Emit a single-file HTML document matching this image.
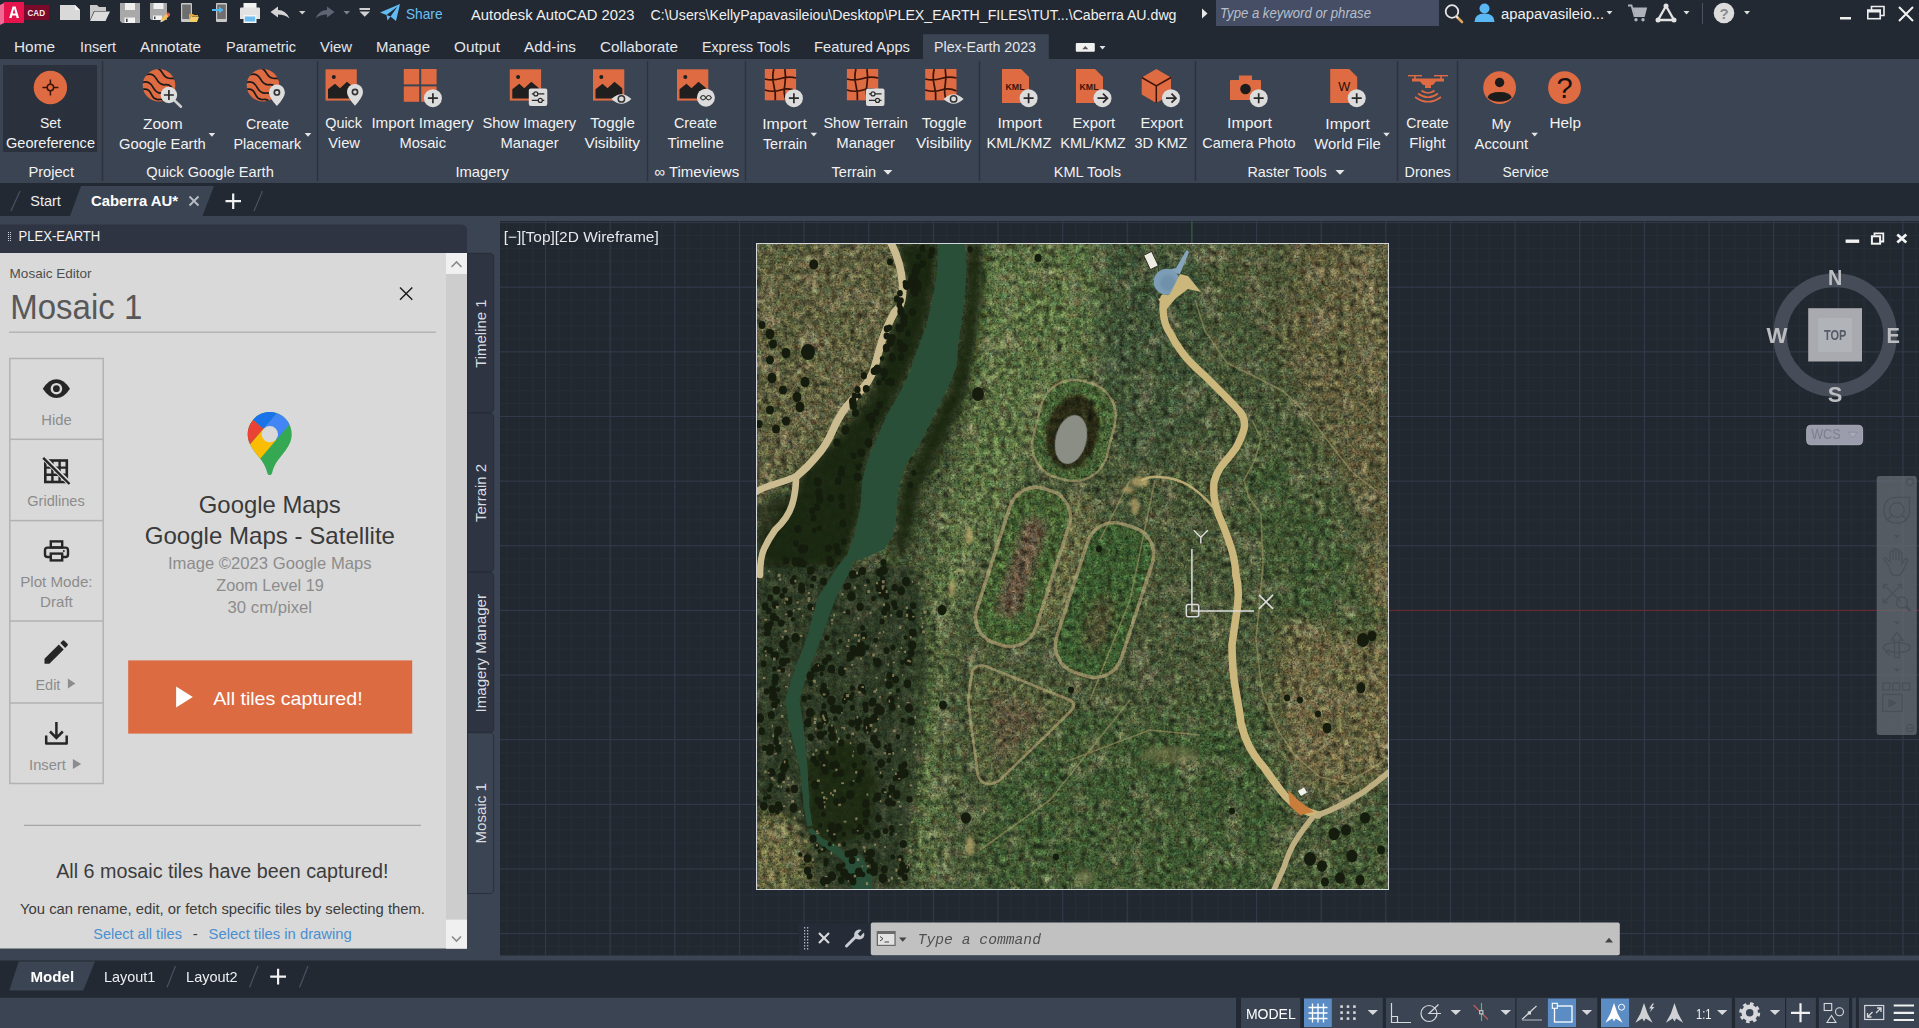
<!DOCTYPE html>
<html><head><meta charset="utf-8"><title>Autodesk AutoCAD 2023 - Caberra AU.dwg</title>
<style>
html,body{margin:0;padding:0;background:#222933;overflow:hidden;}
svg{display:block;font-family:"Liberation Sans",sans-serif;}
text{white-space:pre;}
</style></head><body>
<svg width="1919" height="1028" viewBox="0 0 1919 1028">
<defs>
<pattern id="gmin" x="1191.400" y="609.900" width="12.928" height="12.928" patternUnits="userSpaceOnUse"><path d="M0.5 0V12.928M0 0.5H12.928" stroke="#262d37" stroke-width="1" fill="none"/></pattern>
<pattern id="gmaj" x="1191.400" y="609.900" width="64.640" height="64.640" patternUnits="userSpaceOnUse"><path d="M0.5 0V64.640M0 0.5H64.640" stroke="#323949" stroke-width="1" fill="none"/></pattern>
</defs>
<rect x="0" y="0" width="1919" height="1028" fill="#222933"/>
<rect x="0" y="59" width="1919" height="124" fill="#3b4453"/>
<rect x="923" y="34.2" width="125.8" height="26" fill="#3b4453"/>
<rect x="0" y="216" width="1919" height="6" fill="#3b4453"/>
<rect x="0" y="216" width="500" height="742" fill="#3b4453"/>
<rect x="500" y="221" width="1419" height="734.5" fill="#212830"/>
<rect x="500" y="221" width="1419" height="734" fill="url(#gmin)"/>
<rect x="500" y="221" width="1419" height="734" fill="url(#gmaj)"/>
<rect x="0" y="955.5" width="1919" height="5.5" fill="#3b4453"/>
<rect x="0" y="960.5" width="1919" height="37.2" fill="#222933"/>
<rect x="0" y="997.7" width="1919" height="30.3" fill="#3b4453"/>
<path d="M1389 610.400H1919" stroke="#6b2a30" stroke-width="1"/>
<path d="M1191.900 221V243" stroke="#2c6a32" stroke-width="1"/>
<g id="titlebar">
<path d="M0 5L4 3V23L0 25Z" fill="#f06a96"/>
<rect x="4" y="2" width="20" height="21" fill="#e5144d"/>
<rect x="24" y="5" width="25" height="15" fill="#7a0a2a"/>
<path d="M9.2 18L12.6 6.5H15.6L19 18H16.6L16 15.6H12.2L11.6 18ZM12.7 13.6H15.5L14.1 8.4Z" fill="#fff"/>
<text x="27.5" y="16.3" font-size="9.5" fill="#f6e9ee" textLength="17.5" lengthAdjust="spacingAndGlyphs" font-weight="bold">CAD</text>

<path d="M60 5H75L80 10V20H60Z" fill="#d9d9d9"/><path d="M75 5V10H80Z" fill="#f4f4f4"/>
<path d="M90 5H97L99 7H106V11H94L90 20Z" fill="#c9c9c9"/><path d="M94.5 11.5H110L105.5 21H90Z" fill="#dcdcdc"/>
<path d="M120 3H140V23H122L120 21Z" fill="#a9a9a9"/><rect x="125" y="3" width="10" height="7" fill="#efefef"/><rect x="124.5" y="17.5" width="10.5" height="5.5" fill="#f2f2f2"/><rect x="126" y="18.7" width="1.6" height="3.3" fill="#444"/>
<path d="M150 3H167V20H151.5L150 18.5Z" fill="#a9a9a9"/><rect x="153.5" y="3" width="10" height="6" fill="#efefef"/><rect x="153" y="15.5" width="9" height="4.5" fill="#f2f2f2"/><rect x="154" y="16.5" width="1.5" height="2.6" fill="#444"/>
<path d="M160.5 21.5L161.5 18.5L167 13L169.5 15.5L164 21Z" fill="#f1c15a"/><path d="M166.2 13.8L167.5 12.6Q168.6 12.4 169.6 13.6Q170.4 14.8 169.8 15.6L168.7 16.7Z" fill="#e65a5a"/><path d="M160.3 22.3L161.3 19.3L163.3 21.3Z" fill="#ddd"/>
<rect x="181" y="3" width="11" height="19" rx="1" fill="#c8c8c8"/><rect x="182.2" y="4.5" width="8.6" height="14.5" fill="#6e6e6e"/>
<path d="M189 14H193L194 15H198V16.5H190.5L189 21.5Z" fill="#e3a93c"/><path d="M190.7 16.8H199L197 22H189Z" fill="#f6cf6b"/>
<rect x="216" y="3" width="11" height="19" rx="1" fill="#c8c8c8"/><rect x="217.2" y="4.5" width="8.6" height="14.5" fill="#6e6e6e"/>
<path d="M212 9H219V6.6L223.5 10L219 13.4V11H212Z" fill="#4fb6f2"/>
<rect x="243.5" y="3" width="13" height="5" fill="#f2f2f2"/><path d="M240 8.5Q240 7.5 241 7.5H259Q260 7.500 260 8.5V19H240Z" fill="#e2e2e2"/><rect x="243.500" y="15" width="13" height="8" fill="#f4f4f4"/><rect x="244.8" y="16.5" width="10.4" height="5" fill="#6fbdf0"/>
<path d="M270.5 12L278 6.5V10Q286 10 289.500 18.500Q285 14.5 278 14.500V17.500Z" fill="#d4d4d4"/>
<path d="M299 11H305.500L302.250 14.5Z" fill="#d0d0d0"/>
<path d="M334.500 12L327 6.5V10Q319 10 315.500 18.500Q320 14.5 327 14.500V17.500Z" fill="#5d6573"/>
<path d="M343.500 11H350L346.750 14.5Z" fill="#7c8491"/>
<rect x="359.500" y="8" width="10.500" height="2" fill="#d0d0d0"/><path d="M359.500 11.500H370L364.750 16.800Z" fill="#d0d0d0"/>
<path d="M380 12.500L400 4L396 21L390.500 16.500L387.500 20.500L386.500 15Z" fill="#62bbf3"/><path d="M386.500 15L397.500 6.500L390.500 16.500Z" fill="#222933"/>
<text x="406" y="19" font-size="15" fill="#6cc0f5" textLength="36.5" lengthAdjust="spacingAndGlyphs">Share</text>

<text x="471" y="19.5" font-size="15.5" fill="#f0f0f0" textLength="163.5" lengthAdjust="spacingAndGlyphs">Autodesk AutoCAD 2023</text>

<text x="650.5" y="19.5" font-size="15.5" fill="#f0f0f0" textLength="526" lengthAdjust="spacingAndGlyphs">C:\Users\KellyPapavasileiou\Desktop\PLEX_EARTH_FILES\TUT...\Caberra AU.dwg</text>

<path d="M1202 8.500L1207.500 13.500L1202 18.500Z" fill="#e8e8e8"/>
<rect x="1216" y="0" width="223" height="26" fill="#454e64"/>
<text x="1220" y="18" font-size="14.5" fill="#b9bfca" textLength="151" lengthAdjust="spacingAndGlyphs" font-style="italic">Type a keyword or phrase</text>

<circle cx="1452" cy="11.500" r="6.300" fill="none" stroke="#e6e6e6" stroke-width="1.800"/><path d="M1456.500 16.500L1462 22" stroke="#d9a45c" stroke-width="2.600" stroke-linecap="round"/><path d="M1456 16L1458 18" stroke="#e6e6e6" stroke-width="1.800"/>
<circle cx="1484.500" cy="8.500" r="5" fill="#5ab8f5"/><path d="M1474.500 22Q1474.500 13.500 1484.500 13.500Q1494.500 13.500 1494.500 22Z" fill="#5ab8f5"/>
<text x="1501" y="19" font-size="15.5" fill="#f0f0f0" textLength="103" lengthAdjust="spacingAndGlyphs">apapavasileio...</text>

<path d="M1606.500 11H1612.500L1609.500 14.500Z" fill="#e0e0e0"/>
<path d="M1628 5.500H1631.500L1634.500 16H1644L1646 8.500H1633" fill="none" stroke="#aeb3bb" stroke-width="1.800"/><path d="M1633 8.500H1646L1644 15.500H1635Z" fill="#aeb3bb"/><circle cx="1636" cy="19.700" r="1.700" fill="#aeb3bb"/><circle cx="1643" cy="19.700" r="1.700" fill="#aeb3bb"/>
<path d="M1666 6L1658 20H1674Z" fill="none" stroke="#e2e2e2" stroke-width="2.400" stroke-linejoin="round"/><circle cx="1666" cy="6" r="2.500" fill="#e2e2e2"/><circle cx="1658" cy="20" r="2.500" fill="#e2e2e2"/><circle cx="1674" cy="20" r="2.500" fill="#e2e2e2"/>
<path d="M1683.500 11H1689.500L1686.500 14.500Z" fill="#e0e0e0"/>
<rect x="1702" y="3" width="1" height="21" fill="#4a5262"/>
<circle cx="1724" cy="13" r="10.300" fill="#dcdcdc"/>
<text x="1724" y="18.5" font-size="15" fill="#8a8a8a" text-anchor="middle" font-weight="bold">?</text>

<path d="M1744 11H1750L1747 14.500Z" fill="#e0e0e0"/>
<rect x="1840" y="17" width="11" height="2.500" fill="#eee"/>
<path d="M1871.500 10V6.500H1884V15.500H1880.500" fill="none" stroke="#eee" stroke-width="1.600"/><rect x="1867.800" y="10.300" width="12.400" height="8.400" fill="none" stroke="#eee" stroke-width="1.600"/><rect x="1867" y="9.500" width="14" height="3" fill="#eee"/>
<path d="M1899 7L1913 21M1913 7L1899 21" stroke="#f2f2f2" stroke-width="2"/>
</g>
<g id="ribbon">
<text x="14" y="52" font-size="15" fill="#e4e6ea" textLength="41" lengthAdjust="spacingAndGlyphs">Home</text>

<text x="80" y="52" font-size="15" fill="#e4e6ea" textLength="36" lengthAdjust="spacingAndGlyphs">Insert</text>

<text x="140" y="52" font-size="15" fill="#e4e6ea" textLength="61" lengthAdjust="spacingAndGlyphs">Annotate</text>

<text x="226" y="52" font-size="15" fill="#e4e6ea" textLength="70" lengthAdjust="spacingAndGlyphs">Parametric</text>

<text x="320" y="52" font-size="15" fill="#e4e6ea" textLength="32" lengthAdjust="spacingAndGlyphs">View</text>

<text x="376" y="52" font-size="15" fill="#e4e6ea" textLength="54" lengthAdjust="spacingAndGlyphs">Manage</text>

<text x="454" y="52" font-size="15" fill="#e4e6ea" textLength="46" lengthAdjust="spacingAndGlyphs">Output</text>

<text x="524" y="52" font-size="15" fill="#e4e6ea" textLength="52" lengthAdjust="spacingAndGlyphs">Add-ins</text>

<text x="600" y="52" font-size="15" fill="#e4e6ea" textLength="78" lengthAdjust="spacingAndGlyphs">Collaborate</text>

<text x="702" y="52" font-size="15" fill="#e4e6ea" textLength="88" lengthAdjust="spacingAndGlyphs">Express Tools</text>

<text x="814" y="52" font-size="15" fill="#e4e6ea" textLength="96" lengthAdjust="spacingAndGlyphs">Featured Apps</text>

<text x="934" y="52" font-size="15" fill="#e4e6ea" textLength="102" lengthAdjust="spacingAndGlyphs">Plex-Earth 2023</text>

<rect x="1075.800" y="43" width="19" height="8.800" rx="1" fill="#f0f0f0"/><path d="M1082.300 49.300H1088.300L1085.300 46Z" fill="#555"/><path d="M1099.500 46H1105.500L1102.500 49.500Z" fill="#e0e0e0"/>
<path d="M102.5 61V181" stroke="#2b323e" stroke-width="1.400"/>
<path d="M317.5 61V181" stroke="#2b323e" stroke-width="1.400"/>
<path d="M647.5 61V181" stroke="#2b323e" stroke-width="1.400"/>
<path d="M745.5 61V181" stroke="#2b323e" stroke-width="1.400"/>
<path d="M979.5 61V181" stroke="#2b323e" stroke-width="1.400"/>
<path d="M1195.5 61V181" stroke="#2b323e" stroke-width="1.400"/>
<path d="M1397.5 61V181" stroke="#2b323e" stroke-width="1.400"/>
<path d="M1457.5 61V181" stroke="#2b323e" stroke-width="1.400"/>
<rect x="3" y="65" width="94" height="87" fill="#2a313d"/>
<circle cx="50.400" cy="87.500" r="16.700" fill="#de6b42"/><circle cx="50.400" cy="87.500" r="3.200" fill="none" stroke="#3a1408" stroke-width="1.500"/><path d="M50.400 79.500V84.300M50.400 90.700V95.500M42.400 87.500H47.200M53.600 87.500H58.400" stroke="#3a1408" stroke-width="1.500"/>
<text x="40" y="128" font-size="15" fill="#f2f2f2" textLength="21" lengthAdjust="spacingAndGlyphs">Set</text>

<text x="6" y="148" font-size="15" fill="#f2f2f2" textLength="89" lengthAdjust="spacingAndGlyphs">Georeference</text>

<clipPath id="gc159"><circle cx="159" cy="85.2" r="16.3"/></clipPath>
<circle cx="159" cy="85.2" r="16.3" fill="#de6b42"/>
<g clip-path="url(#gc159)"><path transform="rotate(22 159 85.2)" d="M145 73.2q6 -6 12 -1t11 2t9 4 M142 81.2q6 -6 12 -1t11 2t12 5 M142 89.2q6 -5 12 0t11 2t12 5 M144 96.2q6 -5 11 0t10 2t10 4" stroke="#1c1c1c" stroke-width="1.700" fill="none"/></g>
<path d="M174 100L181 106.700" stroke="#cfcfcf" stroke-width="2.600" stroke-linecap="round"/>
<circle cx="168.9" cy="95" r="8.3" fill="#dcdcdc"/><path d="M163.9 95H173.9M168.9 90V100" stroke="#2a2a2a" stroke-width="1.700"/>
<text x="143" y="129" font-size="15" fill="#f2f2f2" textLength="39.6" lengthAdjust="spacingAndGlyphs">Zoom</text>

<text x="119" y="149" font-size="15" fill="#f2f2f2" textLength="86.8" lengthAdjust="spacingAndGlyphs">Google Earth</text>

<path d="M208.6 133.0H215.20000000000002L211.9 136.8Z" fill="#e6e6e6"/>
<clipPath id="gc263"><circle cx="263" cy="85.2" r="16.3"/></clipPath>
<circle cx="263" cy="85.2" r="16.3" fill="#de6b42"/>
<g clip-path="url(#gc263)"><path transform="rotate(22 263 85.2)" d="M249 73.2q6 -6 12 -1t11 2t9 4 M246 81.2q6 -6 12 -1t11 2t12 5 M246 89.2q6 -5 12 0t11 2t12 5 M248 96.2q6 -5 11 0t10 2t10 4" stroke="#1c1c1c" stroke-width="1.700" fill="none"/></g>
<path d="M276.9 105.9Q268.9 97.4 268.9 92.4A8 8 0 1 1 284.9 92.4Q284.9 97.4 276.9 105.9Z" fill="#dcdcdc"/><circle cx="276.9" cy="92.4" r="2.600" fill="none" stroke="#333" stroke-width="1.700"/>
<text x="246" y="129" font-size="15" fill="#f2f2f2" textLength="43" lengthAdjust="spacingAndGlyphs">Create</text>

<text x="233.4" y="149" font-size="15" fill="#f2f2f2" textLength="67.9" lengthAdjust="spacingAndGlyphs">Placemark</text>

<path d="M304.7 133.0H311.3L308 136.8Z" fill="#e6e6e6"/>
<rect x="325.5" y="69.3" width="31.3" height="31.3" fill="#de6b42"/>
<path d="M328.0 98.6V89.3L335.0 83.8L340.0 88.3L347.0 81.8L354.8 88.3V98.6Z" fill="#1f1f1f"/><circle cx="333.8" cy="77.0" r="2" fill="#1f1f1f"/>
<path d="M355 105.7Q347 97 347 92A8 8 0 1 1 363 92Q363 97 355 105.7Z" fill="#dcdcdc"/><circle cx="355" cy="92" r="2.600" fill="none" stroke="#333" stroke-width="1.700"/>
<text x="325.2" y="127.7" font-size="15" fill="#f2f2f2" textLength="36.8" lengthAdjust="spacingAndGlyphs">Quick</text>

<text x="328.3" y="148" font-size="15" fill="#f2f2f2" textLength="31.7" lengthAdjust="spacingAndGlyphs">View</text>

<rect x="403.8" y="69" width="15.400" height="15.400" fill="#de6b42"/>
<rect x="421.2" y="69" width="15.400" height="15.400" fill="#de6b42"/>
<rect x="403.8" y="86.4" width="15.400" height="15.400" fill="#de6b42"/>
<rect x="421.2" y="86.4" width="15.400" height="15.400" fill="#de6b42"/>
<circle cx="432.9" cy="98.2" r="9" fill="#dcdcdc"/><path d="M427.9 98.2H437.9M432.9 93.2V103.2" stroke="#2a2a2a" stroke-width="1.700"/>
<text x="371.4" y="127.7" font-size="15" fill="#f2f2f2" textLength="102.3" lengthAdjust="spacingAndGlyphs">Import Imagery</text>

<text x="399.4" y="148" font-size="15" fill="#f2f2f2" textLength="46.6" lengthAdjust="spacingAndGlyphs">Mosaic</text>

<rect x="509.8" y="69.3" width="31.3" height="31.3" fill="#de6b42"/>
<path d="M512.3 98.6V89.3L519.3 83.8L524.3 88.3L531.3 81.8L539.1 88.3V98.6Z" fill="#1f1f1f"/><circle cx="518.1" cy="77.0" r="2" fill="#1f1f1f"/>
<rect x="528.8" y="88.4" width="18.5" height="17.5" rx="2" fill="#dcdcdc"/>
<path d="M531.8 93.9H544.3M531.8 100.4H544.3" stroke="#2a2a2a" stroke-width="1.300"/><circle cx="535.8" cy="93.9" r="2" fill="#dcdcdc" stroke="#2a2a2a" stroke-width="1.200"/><circle cx="540.3" cy="100.4" r="2" fill="#dcdcdc" stroke="#2a2a2a" stroke-width="1.200"/>
<text x="482.4" y="127.7" font-size="15" fill="#f2f2f2" textLength="93.8" lengthAdjust="spacingAndGlyphs">Show Imagery</text>

<text x="500.4" y="148" font-size="15" fill="#f2f2f2" textLength="58.2" lengthAdjust="spacingAndGlyphs">Manager</text>

<rect x="593" y="69.3" width="31.3" height="31.3" fill="#de6b42"/>
<path d="M595.5 98.6V89.3L602.5 83.8L607.5 88.3L614.5 81.8L622.3 88.3V98.6Z" fill="#1f1f1f"/><circle cx="601.3" cy="77.0" r="2" fill="#1f1f1f"/>
<path d="M611.4 98.9Q621.4 89.4 631.4 98.9Q621.4 108.4 611.4 98.9Z" fill="#dcdcdc"/><circle cx="621.4" cy="98.9" r="3.200" fill="#dcdcdc" stroke="#333" stroke-width="1.500"/>
<text x="590.3" y="127.7" font-size="15" fill="#f2f2f2" textLength="44.5" lengthAdjust="spacingAndGlyphs">Toggle</text>

<text x="584.4" y="148" font-size="15" fill="#f2f2f2" textLength="55.6" lengthAdjust="spacingAndGlyphs">Visibility</text>

<rect x="677" y="69.3" width="31.3" height="31.3" fill="#de6b42"/>
<path d="M679.5 98.6V89.3L686.5 83.8L691.5 88.3L698.5 81.8L706.3 88.3V98.6Z" fill="#1f1f1f"/><circle cx="685.3" cy="77.0" r="2" fill="#1f1f1f"/>
<circle cx="705.900" cy="97.700" r="9" fill="#dcdcdc"/><path d="M700.400 97.700q2.700 -4.400 5.500 0t5.500 0q-2.700 -4.400 -5.500 0t-5.500 0z" fill="none" stroke="#333" stroke-width="1.200"/>
<text x="674" y="127.7" font-size="15" fill="#f2f2f2" textLength="42.9" lengthAdjust="spacingAndGlyphs">Create</text>

<text x="667.6" y="148" font-size="15" fill="#f2f2f2" textLength="56.3" lengthAdjust="spacingAndGlyphs">Timeline</text>

<rect x="764.8" y="69" width="31.3" height="31.3" fill="#de6b42"/>
<path d="M764.8 79Q772.8 81 780.8 78.5T796.0999999999999 78M764.8 90Q772.8 92.5 780.8 90T796.0999999999999 91M773.8 69Q771.8 77 773.8 85T775.3 100.3M784.8 69Q786.3 77 784.8 85T785.8 100.3" stroke="#3a1408" stroke-width="1.700" fill="none"/>
<circle cx="793.9" cy="98.2" r="9" fill="#dcdcdc"/><path d="M788.9 98.2H798.9M793.9 93.2V103.2" stroke="#2a2a2a" stroke-width="1.700"/>
<text x="762.2" y="128.7" font-size="15" fill="#f2f2f2" textLength="44.8" lengthAdjust="spacingAndGlyphs">Import</text>

<text x="762.9" y="148.6" font-size="15" fill="#f2f2f2" textLength="44.1" lengthAdjust="spacingAndGlyphs">Terrain</text>

<path d="M810.5 132.79999999999998H817.0999999999999L813.8 136.6Z" fill="#e6e6e6"/>
<rect x="846.9" y="69" width="31.3" height="31.3" fill="#de6b42"/>
<path d="M846.9 79Q854.9 81 862.9 78.5T878.1999999999999 78M846.9 90Q854.9 92.5 862.9 90T878.1999999999999 91M855.9 69Q853.9 77 855.9 85T857.4 100.3M866.9 69Q868.4 77 866.9 85T867.9 100.3" stroke="#3a1408" stroke-width="1.700" fill="none"/>
<rect x="866" y="88.4" width="18.5" height="17.5" rx="2" fill="#dcdcdc"/>
<path d="M869 93.9H881.5M869 100.4H881.5" stroke="#2a2a2a" stroke-width="1.300"/><circle cx="873" cy="93.9" r="2" fill="#dcdcdc" stroke="#2a2a2a" stroke-width="1.200"/><circle cx="877.5" cy="100.4" r="2" fill="#dcdcdc" stroke="#2a2a2a" stroke-width="1.200"/>
<text x="823.4" y="127.7" font-size="15" fill="#f2f2f2" textLength="84.4" lengthAdjust="spacingAndGlyphs">Show Terrain</text>

<text x="836.3" y="148" font-size="15" fill="#f2f2f2" textLength="58.6" lengthAdjust="spacingAndGlyphs">Manager</text>

<rect x="925.2" y="69" width="31.3" height="31.3" fill="#de6b42"/>
<path d="M925.2 79Q933.2 81 941.2 78.5T956.5 78M925.2 90Q933.2 92.5 941.2 90T956.5 91M934.2 69Q932.2 77 934.2 85T935.7 100.3M945.2 69Q946.7 77 945.2 85T946.2 100.3" stroke="#3a1408" stroke-width="1.700" fill="none"/>
<path d="M943.6 98.9Q953.6 89.4 963.6 98.9Q953.6 108.4 943.6 98.9Z" fill="#dcdcdc"/><circle cx="953.6" cy="98.9" r="3.200" fill="#dcdcdc" stroke="#333" stroke-width="1.500"/>
<text x="921.7" y="127.7" font-size="15" fill="#f2f2f2" textLength="44.8" lengthAdjust="spacingAndGlyphs">Toggle</text>

<text x="916" y="148" font-size="15" fill="#f2f2f2" textLength="55.6" lengthAdjust="spacingAndGlyphs">Visibility</text>

<path d="M1002 69H1021L1029 77V103H1002Z" fill="#de6b42"/>
<text x="1005.5" y="90" font-size="9" fill="#3a1408" textLength="19" lengthAdjust="spacingAndGlyphs" font-weight="bold">KML</text>

<circle cx="1028.6" cy="98.2" r="9" fill="#dcdcdc"/><path d="M1023.5999999999999 98.2H1033.6M1028.6 93.2V103.2" stroke="#2a2a2a" stroke-width="1.700"/>
<text x="997.4" y="127.7" font-size="15" fill="#f2f2f2" textLength="44.6" lengthAdjust="spacingAndGlyphs">Import</text>

<text x="986.4" y="148" font-size="15" fill="#f2f2f2" textLength="65.0" lengthAdjust="spacingAndGlyphs">KML/KMZ</text>

<path d="M1076 69H1095L1103 77V103H1076Z" fill="#de6b42"/>
<text x="1079.5" y="90" font-size="9" fill="#3a1408" textLength="19" lengthAdjust="spacingAndGlyphs" font-weight="bold">KML</text>

<circle cx="1102.5" cy="98.2" r="9" fill="#dcdcdc"/><path d="M1097.5 98.2H1107.0M1103.0 93.7L1107.5 98.2L1103.0 102.7" stroke="#2a2a2a" stroke-width="1.700" fill="none"/>
<text x="1072.5" y="127.7" font-size="15" fill="#f2f2f2" textLength="42.7" lengthAdjust="spacingAndGlyphs">Export</text>

<text x="1060.3" y="148" font-size="15" fill="#f2f2f2" textLength="65.4" lengthAdjust="spacingAndGlyphs">KML/KMZ</text>

<path d="M1156.300 69L1171 77.500V94.500L1156.300 103L1141.700 94.500V77.500Z" fill="#de6b42"/><path d="M1141.700 77.500L1156.300 86L1171 77.500M1156.300 86V103" stroke="#3a1408" stroke-width="1.500" fill="none"/>
<circle cx="1171" cy="98.2" r="9" fill="#dcdcdc"/><path d="M1166 98.2H1175.5M1171.5 93.7L1176 98.2L1171.5 102.7" stroke="#2a2a2a" stroke-width="1.700" fill="none"/>
<text x="1140.5" y="127.7" font-size="15" fill="#f2f2f2" textLength="42.7" lengthAdjust="spacingAndGlyphs">Export</text>

<text x="1134.6" y="148" font-size="15" fill="#f2f2f2" textLength="52.8" lengthAdjust="spacingAndGlyphs">3D KMZ</text>

<path d="M1230 81Q1230 80 1231 80H1239V75.500H1252V80H1260Q1261 80 1261 81V100H1230Z" fill="#de6b42"/><circle cx="1245.500" cy="89" r="5.300" fill="#1c1c1c"/>
<circle cx="1258.7" cy="98.2" r="9" fill="#dcdcdc"/><path d="M1253.7 98.2H1263.7M1258.7 93.2V103.2" stroke="#2a2a2a" stroke-width="1.700"/>
<text x="1227" y="127.7" font-size="15" fill="#f2f2f2" textLength="45" lengthAdjust="spacingAndGlyphs">Import</text>

<text x="1202.2" y="148" font-size="15" fill="#f2f2f2" textLength="93.3" lengthAdjust="spacingAndGlyphs">Camera Photo</text>

<path d="M1330.2 69H1349.2L1357.2 77V103H1330.2Z" fill="#de6b42"/>
<text x="1338.2" y="91" font-size="12.5" fill="#2a0e04" textLength="12" lengthAdjust="spacingAndGlyphs">W</text>

<circle cx="1356.7" cy="98.2" r="9" fill="#dcdcdc"/><path d="M1351.7 98.2H1361.7M1356.7 93.2V103.2" stroke="#2a2a2a" stroke-width="1.700"/>
<text x="1325.3" y="128.7" font-size="15" fill="#f2f2f2" textLength="44.7" lengthAdjust="spacingAndGlyphs">Import</text>

<text x="1314.3" y="148.6" font-size="15" fill="#f2f2f2" textLength="66.4" lengthAdjust="spacingAndGlyphs">World File</text>

<path d="M1383.2 132.79999999999998H1389.8L1386.5 136.6Z" fill="#e6e6e6"/>
<g fill="#de6b42" stroke="none"><rect x="1408" y="75" width="14" height="1.400"/><rect x="1434" y="75" width="14" height="1.400"/><rect x="1414.200" y="75" width="1.600" height="4"/><rect x="1440.200" y="75" width="1.600" height="4"/><path d="M1412 78.500H1444V81.500H1436L1433 85H1423L1420 81.500H1412Z"/><rect x="1425" y="85" width="6" height="3" /></g>
<path d="M1421.500 90.500Q1428 95.500 1434.500 90.500M1418 93.500Q1428 101 1438 93.500M1415 97Q1428 106.500 1441 97" stroke="#de6b42" stroke-width="1.700" fill="none"/>
<text x="1406.2" y="127.7" font-size="15" fill="#f2f2f2" textLength="42.5" lengthAdjust="spacingAndGlyphs">Create</text>

<text x="1409.3" y="148" font-size="15" fill="#f2f2f2" textLength="36.3" lengthAdjust="spacingAndGlyphs">Flight</text>

<circle cx="1499.600" cy="87.700" r="16.400" fill="#de6b42"/><circle cx="1499.600" cy="82.500" r="4.700" fill="#1c1c1c"/><path d="M1487.500 97.500Q1489 92 1499.600 92Q1510 92 1511.700 97.500Q1507 101.800 1499.600 101.800Q1492 101.800 1487.500 97.500Z" fill="#1c1c1c"/>
<text x="1491.4" y="128.7" font-size="15" fill="#f2f2f2" textLength="19.4" lengthAdjust="spacingAndGlyphs">My</text>

<text x="1474.5" y="148.6" font-size="15" fill="#f2f2f2" textLength="53.7" lengthAdjust="spacingAndGlyphs">Account</text>

<path d="M1531.4 132.79999999999998H1538.0L1534.7 136.6Z" fill="#e6e6e6"/>
<circle cx="1564.500" cy="87.700" r="16.400" fill="#de6b42"/>
<text x="1564.5" y="98" font-size="29" fill="#111" text-anchor="middle">?</text>

<text x="1549.5" y="127.7" font-size="15" fill="#f2f2f2" textLength="31.5" lengthAdjust="spacingAndGlyphs">Help</text>

<text x="28.4" y="176.9" font-size="15" fill="#f2f2f2" textLength="45.6" lengthAdjust="spacingAndGlyphs">Project</text>

<text x="146.3" y="176.9" font-size="15" fill="#f2f2f2" textLength="127.5" lengthAdjust="spacingAndGlyphs">Quick Google Earth</text>

<text x="455.4" y="176.9" font-size="15" fill="#f2f2f2" textLength="53.5" lengthAdjust="spacingAndGlyphs">Imagery</text>

<text x="654.3" y="176.9" font-size="15" fill="#f2f2f2" textLength="84.9" lengthAdjust="spacingAndGlyphs">∞ Timeviews</text>

<text x="831.6" y="176.9" font-size="15" fill="#f2f2f2" textLength="44.4" lengthAdjust="spacingAndGlyphs">Terrain</text>

<path d="M883.4 170.0H892.4L887.9 174.8Z" fill="#e6e6e6"/>
<text x="1053.7" y="176.9" font-size="15" fill="#f2f2f2" textLength="67.3" lengthAdjust="spacingAndGlyphs">KML Tools</text>

<text x="1247.5" y="176.9" font-size="15" fill="#f2f2f2" textLength="79.2" lengthAdjust="spacingAndGlyphs">Raster Tools</text>

<path d="M1335.5 170.0H1344.5L1340 174.8Z" fill="#e6e6e6"/>
<text x="1404.6" y="176.9" font-size="15" fill="#f2f2f2" textLength="46.2" lengthAdjust="spacingAndGlyphs">Drones</text>

<text x="1502.6" y="176.9" font-size="15" fill="#f2f2f2" textLength="46.2" lengthAdjust="spacingAndGlyphs">Service</text>

</g>
<g id="filetabs">
<path d="M81 186H214L202.500 216H70Z" fill="#3b4453"/>
<path d="M11 211L20 191M254 211L262.500 191" stroke="#4a5262" stroke-width="1.200"/>
<text x="30.3" y="206.4" font-size="15" fill="#eceef1" textLength="30.6" lengthAdjust="spacingAndGlyphs">Start</text>

<text x="91" y="206.4" font-size="15" fill="#ffffff" textLength="87" lengthAdjust="spacingAndGlyphs" font-weight="bold">Caberra AU*</text>

<path d="M189.500 196.500L198.500 205.500M198.500 196.500L189.500 205.500" stroke="#b5bac3" stroke-width="2"/>
<path d="M225.500 201.200H241M233.200 193.500V209" stroke="#f2f2f2" stroke-width="2.200"/>
</g>
<g id="palette">
<path d="M0 224.500H461Q467 224.500 467 230.500V253H0Z" fill="#2e3441"/>
<rect x="8" y="232" width="1" height="1" fill="#cfd2d8"/><rect x="10" y="232" width="1" height="1" fill="#cfd2d8"/>
<rect x="8" y="234" width="1" height="1" fill="#cfd2d8"/><rect x="10" y="234" width="1" height="1" fill="#cfd2d8"/>
<rect x="8" y="236" width="1" height="1" fill="#cfd2d8"/><rect x="10" y="236" width="1" height="1" fill="#cfd2d8"/>
<rect x="8" y="238" width="1" height="1" fill="#cfd2d8"/><rect x="10" y="238" width="1" height="1" fill="#cfd2d8"/>
<rect x="8" y="240" width="1" height="1" fill="#cfd2d8"/><rect x="10" y="240" width="1" height="1" fill="#cfd2d8"/>
<text x="18.6" y="241.4" font-size="15" fill="#f4f4f4" textLength="81.6" lengthAdjust="spacingAndGlyphs">PLEX-EARTH</text>

<rect x="0" y="253" width="467" height="695.500" fill="#d9d9d9"/>
<rect x="446" y="253" width="21" height="695.500" fill="#cdcdcd"/>
<rect x="446" y="253" width="21" height="21" fill="#f0f0f0"/><rect x="446" y="919.700" width="21" height="28.800" fill="#f0f0f0"/>
<path d="M451.500 267L456.500 262L461.500 267" fill="none" stroke="#8a8a8a" stroke-width="1.600"/><path d="M452 936.500L456.500 941L461 936.500" fill="none" stroke="#8a8a8a" stroke-width="1.600"/>
<path d="M467.500 253.3H489.500Q493.700 253.3 493.700 257.3V408.7Q493.700 412.7 489.500 412.7H467.500Z" fill="#2e3441" stroke="#252b36" stroke-width="0.800"/>
<text transform="translate(486.300 333.65) rotate(-90)" text-anchor="middle" font-size="15" fill="#dadde2" textLength="68.30000000000001" lengthAdjust="spacingAndGlyphs">Timeline 1</text>
<path d="M467.500 413H489.500Q493.700 413 493.700 417V568Q493.700 572 489.500 572H467.500Z" fill="#2e3441" stroke="#252b36" stroke-width="0.800"/>
<text transform="translate(486.300 493.0) rotate(-90)" text-anchor="middle" font-size="15" fill="#dadde2" textLength="58" lengthAdjust="spacingAndGlyphs">Terrain 2</text>
<path d="M467.500 572.3H489.500Q493.700 572.3 493.700 576.3V728.4Q493.700 732.4 489.500 732.4H467.500Z" fill="#2e3441" stroke="#252b36" stroke-width="0.800"/>
<text transform="translate(486.300 653.25) rotate(-90)" text-anchor="middle" font-size="15" fill="#dadde2" textLength="118.5" lengthAdjust="spacingAndGlyphs">Imagery Manager</text>
<path d="M467.500 732.7H489.500Q493.700 732.7 493.700 736.7V889.5Q493.700 893.5 489.500 893.5H467.500Z" fill="#3b4453" stroke="#252b36" stroke-width="0.800"/>
<text transform="translate(486.300 813.25) rotate(-90)" text-anchor="middle" font-size="15" fill="#dadde2" textLength="60.5" lengthAdjust="spacingAndGlyphs">Mosaic 1</text>
<text x="9.6" y="278" font-size="13.5" fill="#4e4e4e" textLength="82" lengthAdjust="spacingAndGlyphs">Mosaic Editor</text>

<text x="10.3" y="318.7" font-size="35" fill="#585858" textLength="132" lengthAdjust="spacingAndGlyphs">Mosaic 1</text>

<path d="M400 287.500L412.300 299.800M412.300 287.500L400 299.800" stroke="#1a1a1a" stroke-width="1.400"/>
<rect x="9" y="331.500" width="427" height="1.500" fill="#b4b4b4"/>
<rect x="9.800" y="358.500" width="93.400" height="425" fill="none" stroke="#b2b2b2" stroke-width="1.500"/>
<rect x="9.800" y="438.55" width="93.400" height="1.500" fill="#b2b2b2"/>
<rect x="9.800" y="519.85" width="93.400" height="1.500" fill="#b2b2b2"/>
<rect x="9.800" y="620.25" width="93.400" height="1.500" fill="#b2b2b2"/>
<rect x="9.800" y="702.25" width="93.400" height="1.500" fill="#b2b2b2"/>
<path d="M42.800 388.700Q49 379.300 56.400 379.300Q63.800 379.300 70 388.700Q63.800 398.100 56.400 398.100Q49 398.100 42.800 388.700Z" fill="#262626"/><circle cx="56.400" cy="388.700" r="5.800" fill="#d9d9d9"/><circle cx="56.400" cy="388.700" r="3.400" fill="#262626"/>
<text x="41.3" y="424.9" font-size="15" fill="#8c8c8c" textLength="30.4" lengthAdjust="spacingAndGlyphs">Hide</text>

<rect x="45.300" y="460.500" width="21.500" height="21.500" fill="none" stroke="#262626" stroke-width="2.600"/><path d="M52.400 460V482M59.600 460V482M45 467.600H67M45 474.800H67" stroke="#262626" stroke-width="2.400"/><path d="M42.500 456.500L70 484" stroke="#d9d9d9" stroke-width="5"/><path d="M43.200 457.800L69.500 484" stroke="#262626" stroke-width="2.400"/>
<text x="27.2" y="506" font-size="15" fill="#8c8c8c" textLength="57.6" lengthAdjust="spacingAndGlyphs">Gridlines</text>

<rect x="50.800" y="541.400" width="11.400" height="6" fill="none" stroke="#262626" stroke-width="2.400"/><rect x="45" y="547.600" width="23" height="9.400" rx="2.600" fill="none" stroke="#262626" stroke-width="2.400"/><rect x="50.800" y="553.600" width="11.400" height="6.800" fill="#d9d9d9" stroke="#262626" stroke-width="2.400"/><circle cx="63.800" cy="551" r="1" fill="#262626"/>
<text x="20.2" y="586.9" font-size="15" fill="#8c8c8c" textLength="72.4" lengthAdjust="spacingAndGlyphs">Plot Mode:</text>

<text x="40" y="606.5" font-size="15" fill="#8c8c8c" textLength="32.8" lengthAdjust="spacingAndGlyphs">Draft</text>

<path d="M44.500 663.700V658.800L58.800 644.500L63.700 649.400L49.400 663.700Z" fill="#262626"/><path d="M60.300 643L62.600 640.700Q63.500 639.900 64.400 640.700L67.500 643.800Q68.300 644.700 67.500 645.600L65.200 647.900Z" fill="#262626"/>
<text x="35.4" y="689.5" font-size="15" fill="#8c8c8c" textLength="25" lengthAdjust="spacingAndGlyphs">Edit</text>

<path d="M67.900 678.500L75.400 683.500L67.900 688.500Z" fill="#8c8c8c"/>
<path d="M56.400 722V737M50 731.500L56.400 738L62.800 731.500" fill="none" stroke="#262626" stroke-width="2.500"/><path d="M46.200 735.500V743.600H66.700V735.500" fill="none" stroke="#262626" stroke-width="2.500" stroke-linejoin="round"/>
<text x="29.1" y="769.9" font-size="15" fill="#8c8c8c" textLength="36.7" lengthAdjust="spacingAndGlyphs">Insert</text>

<path d="M72.900 759L81.200 764L72.900 769Z" fill="#8c8c8c"/>
<clipPath id="gpin"><path d="M269.700 412.100C257.500 412.100 247.700 422 247.700 434.100C247.700 440.500 250 445 253.500 450C258.500 457 264.500 462 267.200 472.500C267.600 474.300 268.500 475.100 269.700 475.100C270.900 475.100 271.800 474.300 272.200 472.500C274.900 462 280.900 457 285.900 450C289.400 445 291.700 440.500 291.700 434.100C291.700 422 281.900 412.100 269.700 412.100Z"/></clipPath>
<g clip-path="url(#gpin)"><rect x="240" y="405" width="60" height="75" fill="#34a853"/><path d="M263.350 428.650L289.300 398.400L312.500 397.600L276.350 439.800Z" fill="#4285f4"/><path d="M263.350 428.650L276.350 439.800L234.400 488.800L224.200 474.400Z" fill="#fbbc04"/><path d="M263.350 428.650L289.300 398.400L230 390L239.400 408.200Z" fill="#1a73e8"/><path d="M263.350 428.650L239.400 408.200L220 440L224.200 474.400Z" fill="#ea4335"/></g>
<circle cx="269.800" cy="434.200" r="8.200" fill="#d9d9d9"/>
<text x="198.8" y="512.6" font-size="24" fill="#3a3a3a" textLength="142" lengthAdjust="spacingAndGlyphs">Google Maps</text>

<text x="144.7" y="544" font-size="24" fill="#3a3a3a" textLength="250.3" lengthAdjust="spacingAndGlyphs">Google Maps - Satellite</text>

<text x="168" y="569" font-size="16.5" fill="#8c8c8c" textLength="203.6" lengthAdjust="spacingAndGlyphs">Image ©2023 Google Maps</text>

<text x="216.3" y="590.8" font-size="16.5" fill="#8c8c8c" textLength="107.4" lengthAdjust="spacingAndGlyphs">Zoom Level 19</text>

<text x="227.6" y="613" font-size="16.5" fill="#8c8c8c" textLength="84.4" lengthAdjust="spacingAndGlyphs">30 cm/pixel</text>

<rect x="128.200" y="660.400" width="284" height="73.200" fill="#dd6b42"/>
<path d="M176.100 686.600L192.800 697L176.100 707.400Z" fill="#fff"/>
<text x="213.2" y="704.5" font-size="19" fill="#fff" textLength="149.4" lengthAdjust="spacingAndGlyphs">All tiles captured!</text>

<rect x="24" y="824.800" width="397" height="1" fill="#9a9a9a"/>
<text x="56.2" y="877.7" font-size="20" fill="#3c3c3c" textLength="332.2" lengthAdjust="spacingAndGlyphs">All 6 mosaic tiles have been captured!</text>

<text x="20" y="913.5" font-size="15" fill="#3c3c3c" textLength="405" lengthAdjust="spacingAndGlyphs">You can rename, edit, or fetch specific tiles by selecting them.</text>

<text x="93.3" y="938.5" font-size="15" fill="#4a8fd0" textLength="88.6" lengthAdjust="spacingAndGlyphs">Select all tiles</text>

<text x="192.8" y="938.5" font-size="15" fill="#3c3c3c">-</text>

<text x="208.6" y="938.5" font-size="15" fill="#4a8fd0" textLength="143.2" lengthAdjust="spacingAndGlyphs">Select tiles in drawing</text>

</g>
<defs>
<clipPath id="satclip"><rect x="756.500" y="243.500" width="632" height="646"/></clipPath>
<filter id="b12" x="-20%" y="-20%" width="140%" height="140%"><feGaussianBlur stdDeviation="10"/></filter>
<filter id="b5" x="-20%" y="-20%" width="140%" height="140%"><feGaussianBlur stdDeviation="4"/></filter>
<filter id="b2" x="-20%" y="-20%" width="140%" height="140%"><feGaussianBlur stdDeviation="1.800"/></filter>
<filter id="b1" x="-20%" y="-20%" width="140%" height="140%"><feGaussianBlur stdDeviation="0.700"/></filter>
<filter id="noise" x="0" y="0" width="100%" height="100%" color-interpolation-filters="sRGB">
 <feTurbulence type="fractalNoise" baseFrequency="0.55" numOctaves="2" seed="7" result="n"/>
 <feColorMatrix in="n" type="matrix" values="0.85 0.75 0.75 0 -0.675  0.75 0.85 0.75 0 -0.675  0.75 0.75 0.8 0 -0.65  0 0 0 0 1"/>
</filter>
<filter id="noise2" x="0" y="0" width="100%" height="100%" color-interpolation-filters="sRGB">
 <feTurbulence type="fractalNoise" baseFrequency="0.16" numOctaves="2" seed="23" result="n"/>
 <feColorMatrix in="n" type="matrix" values="0.9 0.65 0.55 0 -0.55  0.62 0.9 0.58 0 -0.55  0.5 0.8 0.75 0 -0.53  0 0 0 0 1"/>
</filter>
<filter id="dspeck" x="0" y="0" width="100%" height="100%" color-interpolation-filters="sRGB">
 <feTurbulence type="fractalNoise" baseFrequency="0.5" numOctaves="2" seed="41" result="n"/>
 <feColorMatrix in="n" type="matrix" values="0 0 0 0 0.06  0 0 0 0 0.08  0 0 0 0 0.04  3.5 3.5 0 0 -4.0"/>
</filter>
<filter id="blotch" x="0" y="0" width="100%" height="100%">
 <feTurbulence type="fractalNoise" baseFrequency="0.03" numOctaves="3" seed="3" result="n"/>
 <feColorMatrix in="n" type="matrix" values="0 0 0 0 0.1  0 0 0 0 0.13  0 0 0 0 0.05  2.4 0 0 0 -1.0"/>
</filter>
<filter id="blotch2" x="0" y="0" width="100%" height="100%">
 <feTurbulence type="fractalNoise" baseFrequency="0.045" numOctaves="3" seed="11" result="n"/>
 <feColorMatrix in="n" type="matrix" values="0 0 0 0 0.5  0 0 0 0 0.4  0 0 0 0 0.27  0 2.4 0 0 -1.15"/>
</filter>
</defs>
<g clip-path="url(#satclip)">
<rect x="756" y="243" width="633" height="647" fill="#4a5a3b"/>
<g filter="url(#b12)">
<path d="M740 230H900L905 290L885 345L865 395L832 440L796 478L740 500Z" fill="#6a6846"/>
<path d="M975 243H1150L1150 330L1060 400L1000 520L940 640L945 890H920L915 700L935 560L965 420Z" fill="#627a4a"/>
<path d="M1275 230H1400V590L1350 490L1300 390L1265 320Z" fill="#676242"/>
<path d="M1330 230H1400V460L1355 380Z" fill="#716b48"/>
<path d="M1200 243H1300L1290 330L1230 290Z" fill="#525c3c"/>
<path d="M1280 600L1400 540V770L1335 800L1290 770L1275 700Z" fill="#766d49"/>
<path d="M1250 420L1340 520L1389 640L1280 620L1245 520Z" fill="#3f5a34"/>
<path d="M1000 720L1260 700L1290 830L1270 900H960Z" fill="#3f5c34"/>
<path d="M1310 830L1400 780V900H1280Z" fill="#445c38"/>
<path d="M1100 243H1200L1200 420L1130 470L1090 380Z" fill="#41563a"/>
<path d="M740 805L795 812L812 850L805 900H740Z" fill="#74724a"/>
</g>
<rect x="756" y="243" width="633" height="647" filter="url(#blotch)" opacity="0.5"/>
<rect x="756" y="243" width="633" height="647" filter="url(#blotch2)" opacity="0.45"/>
<g filter="url(#b1)" fill="none">
<ellipse cx="1062" cy="560" rx="26" ry="70" transform="rotate(18 1062 560)" fill="#75774e" filter="url(#b5)" stroke="none" opacity="0.8"/>
<g transform="translate(1074 430.500) rotate(14)">
<rect x="-38" y="-50" width="76" height="100" rx="34" fill="#4d6b3b" stroke="#8a865c" stroke-width="2.500" stroke-opacity="0.7"/>
<ellipse cx="-1" cy="2" rx="26" ry="38" fill="#2a2916" filter="url(#b2)"/>
</g>
<g transform="translate(1023 567) rotate(18)">
<rect x="-31" y="-81" width="62" height="162" rx="27" fill="#4b6839" stroke="#9a9068" stroke-width="3.500" stroke-opacity="0.85"/>
<rect x="-13" y="-52" width="24" height="104" rx="12" fill="#6d5a48" filter="url(#b5)" stroke="none"/>
</g>
<g transform="translate(1104.500 600) rotate(18)">
<rect x="-34" y="-78" width="68" height="156" rx="28" fill="#416235" stroke="#9a9068" stroke-width="3.500" stroke-opacity="0.85"/>
<ellipse cx="2" cy="25" rx="14" ry="30" fill="#5a5038" filter="url(#b5)" stroke="none" opacity="0.7"/>
</g>
<path d="M972 672Q975 664 985 666L1070 700Q1078 704 1070 712L1000 780Q985 790 978 776L968 700Z" fill="#5b6642" stroke="#93895f" stroke-width="2.500" stroke-opacity="0.75"/>
<path d="M990 690L1050 712L995 768Z" fill="#6a5a47" filter="url(#b5)" stroke="none" opacity="0.7"/>
</g>
<rect x="756" y="243" width="633" height="647" filter="url(#noise2)" style="mix-blend-mode:overlay" opacity="0.6"/>
<rect x="756" y="243" width="633" height="647" filter="url(#noise)" style="mix-blend-mode:overlay" opacity="0.4"/>
<rect x="756" y="243" width="633" height="647" filter="url(#dspeck)" opacity="0.5"/>
<rect x="756" y="243" width="633" height="647" fill="#2a2f18" opacity="0.14"/>
<g filter="url(#b1)" fill="none" stroke="#a0966c" stroke-opacity="0.62">
<rect x="-38" y="-50" width="76" height="100" rx="34" transform="translate(1074 430.500) rotate(14)" stroke-width="2.200" stroke-opacity="0.6"/>
<rect x="-31" y="-81" width="62" height="162" rx="27" transform="translate(1023 567) rotate(18)" stroke-width="3.200"/>
<rect x="-34" y="-78" width="68" height="156" rx="28" transform="translate(1104.500 600) rotate(18)" stroke-width="3.200"/>
<path d="M972 672Q975 664 985 666L1070 700Q1078 704 1070 712L1000 780Q985 790 978 776L968 700Z" stroke-width="2.600" stroke-opacity="0.65"/>
</g>
<g filter="url(#b5)" fill="#19240f">
<path d="M897 243H940L933 300L918 352L900 393L880 430L865 470L860 520L850 556L838 566H760L762 540L778 520L795 492L800 470L835 440L868 398L885 350L898 315L906 285Z" opacity="0.92"/>
<path d="M965 243H984L982 300L975 350L968 392L946 440L922 490L908 548L890 560L896 520L900 484L920 445L948 388L958 344L965 295Z" opacity="0.9" filter="url(#b2)"/>
<path d="M756 505L790 490L792 510L775 532L763 552L760 566H756Z" opacity="0.7"/>
<path d="M756 566H915L925 600L930 660L925 730L915 800L900 890H815L808 840L790 815L756 808Z" opacity="0.5"/>
<path d="M805 760L850 735L880 780L870 830L830 850L808 830Z" opacity="0.75"/>
</g>
<ellipse cx="1071" cy="439.500" rx="15.500" ry="25" transform="rotate(14 1071 439.500)" fill="#8b8e84" filter="url(#b1)"/>
<g filter="url(#b1)"><path d="M938.7 243L937.1 272.3L932.2 301.7L925.7 327.7L915.9 353.8L909.4 373.3L899.6 392.9L886.6 415.7L876.8 438.5L868.7 458L862.1 480.8L860.5 506.9L854 536.2L847 555L838 566L826 585L818 597L807.5 636L793 675L785 700L790 729L799.8 768L803.7 806.7L807.5 826L812.5 826L809.5 806.7L807.6 768L803.7 729L799.5 700L806.6 675L822 636L836 597L848 575L853 562L870 556L884 549L893 536L896 520L897 500L899.6 484.1L906.1 464.5L919.2 445L928.9 425.4L938.7 405.9L948.5 386.4L956.6 366.8L958.2 344L961.5 321.2L964.8 295.1L966.4 272.3L964.8 243Z" fill="#2b5037"/>
<path d="M812 828L822 838L836 845L845 853L861 855L871 875L873 890H853L847 875L845 862L832 852L818 843L808 830Z" fill="#2b5037"/></g>
<g filter="url(#b1)" fill="none" stroke="#a99a68" stroke-opacity="0.55" stroke-width="1.600">
<path d="M1195 300L1205 331L1227 363L1252 375L1283 391L1309 416L1331 445L1353 473L1378 492"/>
<path d="M1252 420L1261 438L1255 460L1244 480L1249 498L1261 514L1263 566L1256 640L1262 692L1278 730L1294 755L1320 777L1348 783L1385 760"/>
<path d="M1155 480L1130 600L1090 700M1100 540L1130 480"/>
<path d="M1070 760L1150 730L1200 735M1130 700L1050 800L980 850"/>
</g>
<g filter="url(#b2)" fill="#c4ab70" opacity="0.7">
<ellipse cx="1140" cy="482" rx="9" ry="5"/><ellipse cx="1135" cy="506" rx="4" ry="8"/><ellipse cx="1128" cy="490" rx="6" ry="3"/>
<ellipse cx="969" cy="536" rx="4" ry="9"/><ellipse cx="952" cy="588" rx="3" ry="9"/><ellipse cx="970" cy="846" rx="4" ry="10" />
<ellipse cx="1170" cy="755" rx="30" ry="9" fill="#7f7c50" opacity="0.6"/><ellipse cx="1085" cy="877" rx="10" ry="7" fill="#8f8a5e" opacity="0.6"/>
</g>
<g filter="url(#b1)" fill="none" stroke="#cbb67c" stroke-linecap="round" stroke-linejoin="round">
<path d="M891 243Q901 262 902.500 284T894.500 312Q886 328 882 341T874 369Q870 380 863 388T846 407Q838 418 832 432T816 457Q807 468 797 476" stroke-width="7.600" stroke="#cbbb90"/>
<path d="M797 476Q786 481 775 484T756 492" stroke-width="6.600" stroke="#cbbb90"/>
<path d="M796 477Q796 492 792 505T775 530Q768 540 764 549T760 575" stroke-width="6.600" stroke="#cbbb90"/>
<path d="M1164 298Q1162 308 1164 318T1169.500 332Q1175 343 1182.500 353T1204.500 375.500Q1216 387 1226.500 397.500T1241 413Q1246 421 1244 429T1236 448Q1230 456 1223.500 463.500T1214 482.500Q1213 494 1215.500 504.500T1223.500 526.500Q1228 538 1231.500 549T1236 575" stroke-width="7.400"/>
<path d="M1236 575Q1240 590 1237 610T1232 645Q1232 670 1236 692T1241 723.500Q1244 736 1249 746T1264.500 768Q1272 779 1280 789.500T1296 805.500Q1306 812 1318 815" stroke-width="7.600"/>
<path d="M1318 815Q1330 811 1340 805.500T1362 793Q1376 783 1389 772" stroke-width="5.600" stroke="#bcae80"/>
<path d="M1312 818Q1303 829 1296 840T1283.500 868.500Q1278 880 1274 890" stroke-width="5.600" stroke="#bcae80"/>
<path d="M1214 508Q1200 492 1188 485T1160 477Q1150 476 1142 480" stroke-width="2.600" stroke-opacity="0.85"/>
</g>
<path d="M1288 790L1298 800L1314 812L1300 815L1290 806Z" fill="#c97d3a" filter="url(#b1)"/>
<rect x="1299" y="789" width="7" height="6" fill="#f2f2ec" transform="rotate(-30 1302 792)"/>
<path d="M1161 272L1176 268L1186.500 250L1189 252L1180 274Z" fill="#86a5bd" filter="url(#b1)"/><circle cx="1166.700" cy="281.800" r="13" fill="#7d9db6" filter="url(#b1)"/><circle cx="1168" cy="283" r="8" fill="#6f91ab" filter="url(#b2)"/>
<path d="M1180 274L1188 276L1201 292L1188 289L1176 298L1166 310L1158 299L1170 294Z" fill="#cbb67c" filter="url(#b1)"/>
<rect x="1146.500" y="252.500" width="9" height="16" fill="#ecece2" stroke="#2a2a1a" stroke-width="1" transform="rotate(-25 1151 260.500)"/>
<g filter="url(#b1)">
<ellipse cx="813.7" cy="264.4" rx="4.5" ry="5.2" fill="#131d0d"/>
<ellipse cx="762.0" cy="325.0" rx="3.5" ry="4.0" fill="#131d0d"/>
<ellipse cx="770.0" cy="334.0" rx="4.5" ry="5.2" fill="#131d0d"/>
<ellipse cx="773.0" cy="344.0" rx="4.0" ry="4.6" fill="#131d0d"/>
<ellipse cx="786.0" cy="353.0" rx="4.5" ry="5.2" fill="#131d0d"/>
<ellipse cx="770.0" cy="360.0" rx="4.0" ry="4.6" fill="#131d0d"/>
<ellipse cx="808.0" cy="352.0" rx="7.0" ry="8.0" fill="#131d0d"/>
<ellipse cx="772.0" cy="378.0" rx="4.5" ry="5.2" fill="#131d0d"/>
<ellipse cx="805.0" cy="382.0" rx="4.5" ry="5.2" fill="#131d0d"/>
<ellipse cx="783.0" cy="390.0" rx="4.0" ry="4.6" fill="#131d0d"/>
<ellipse cx="797.0" cy="397.0" rx="4.5" ry="5.2" fill="#131d0d"/>
<ellipse cx="800.0" cy="407.0" rx="4.5" ry="5.2" fill="#131d0d"/>
<ellipse cx="770.0" cy="410.0" rx="4.0" ry="4.6" fill="#131d0d"/>
<ellipse cx="786.0" cy="421.0" rx="4.0" ry="4.6" fill="#131d0d"/>
<ellipse cx="759.0" cy="424.0" rx="3.5" ry="4.0" fill="#131d0d"/>
<ellipse cx="776.0" cy="429.0" rx="4.0" ry="4.6" fill="#131d0d"/>
<ellipse cx="890.0" cy="262.0" rx="3.0" ry="3.4" fill="#131d0d"/>
<ellipse cx="1038.0" cy="258.0" rx="3.5" ry="4.0" fill="#131d0d"/>
<ellipse cx="1334.0" cy="834.0" rx="5.5" ry="6.3" fill="#131d0d"/>
<ellipse cx="1346.0" cy="830.0" rx="5.0" ry="5.8" fill="#131d0d"/>
<ellipse cx="1310.0" cy="859.0" rx="6.0" ry="6.9" fill="#131d0d"/>
<ellipse cx="1322.0" cy="866.0" rx="5.0" ry="5.8" fill="#131d0d"/>
<ellipse cx="1352.0" cy="856.0" rx="5.5" ry="6.3" fill="#131d0d"/>
<ellipse cx="1365.0" cy="818.0" rx="5.0" ry="5.8" fill="#131d0d"/>
<ellipse cx="1340.0" cy="878.0" rx="5.0" ry="5.8" fill="#131d0d"/>
<ellipse cx="1360.0" cy="880.0" rx="4.5" ry="5.2" fill="#131d0d"/>
<ellipse cx="1381.0" cy="850.0" rx="4.0" ry="4.6" fill="#131d0d"/>
<ellipse cx="1325.0" cy="882.0" rx="4.0" ry="4.6" fill="#131d0d"/>
<ellipse cx="1363.0" cy="640.0" rx="6.0" ry="6.9" fill="#131d0d"/>
<ellipse cx="1372.0" cy="636.0" rx="4.5" ry="5.2" fill="#131d0d"/>
<ellipse cx="1361.0" cy="688.0" rx="4.5" ry="5.2" fill="#131d0d"/>
<ellipse cx="1327.0" cy="728.0" rx="4.5" ry="5.2" fill="#131d0d"/>
<ellipse cx="1318.0" cy="714.0" rx="3.0" ry="3.4" fill="#131d0d"/>
<ellipse cx="1300.0" cy="700.0" rx="3.0" ry="3.4" fill="#131d0d"/>
<ellipse cx="1287.0" cy="698.0" rx="3.0" ry="3.4" fill="#131d0d"/>
<ellipse cx="1232.0" cy="811.0" rx="3.0" ry="3.4" fill="#131d0d"/>
<ellipse cx="978.0" cy="394.0" rx="6.0" ry="6.9" fill="#131d0d"/>
<ellipse cx="1099.0" cy="549.0" rx="3.0" ry="3.4" fill="#131d0d"/>
<ellipse cx="942.0" cy="610.0" rx="4.5" ry="5.2" fill="#131d0d"/>
<ellipse cx="943.0" cy="705.0" rx="4.0" ry="4.6" fill="#131d0d"/>
<ellipse cx="966.0" cy="818.0" rx="5.0" ry="5.8" fill="#131d0d"/>
<ellipse cx="1071.0" cy="690.0" rx="3.0" ry="3.4" fill="#131d0d"/>
<ellipse cx="1056.0" cy="857.0" rx="3.0" ry="3.4" fill="#131d0d"/>
<ellipse cx="865.9" cy="803.7" rx="3.8" ry="4.4" fill="#131d0d"/>
<ellipse cx="839.2" cy="867.2" rx="3.5" ry="4.0" fill="#131d0d"/>
<ellipse cx="913.2" cy="605.7" rx="3.1" ry="3.5" fill="#131d0d"/>
<ellipse cx="857.6" cy="574.1" rx="2.5" ry="2.9" fill="#131d0d"/>
<ellipse cx="807.5" cy="858.6" rx="3.8" ry="4.3" fill="#131d0d"/>
<ellipse cx="783.6" cy="764.5" rx="2.3" ry="2.6" fill="#131d0d"/>
<ellipse cx="795.6" cy="637.9" rx="4.3" ry="4.9" fill="#131d0d"/>
<ellipse cx="908.3" cy="661.1" rx="4.2" ry="4.8" fill="#131d0d"/>
<ellipse cx="851.7" cy="783.5" rx="2.5" ry="2.8" fill="#131d0d"/>
<ellipse cx="810.8" cy="683.8" rx="2.4" ry="2.7" fill="#131d0d"/>
<ellipse cx="784.8" cy="590.5" rx="2.7" ry="3.1" fill="#131d0d"/>
<ellipse cx="862.5" cy="571.1" rx="3.6" ry="4.1" fill="#131d0d"/>
<ellipse cx="817.4" cy="667.6" rx="3.9" ry="4.5" fill="#131d0d"/>
<ellipse cx="841.7" cy="669.5" rx="3.1" ry="3.6" fill="#131d0d"/>
<ellipse cx="879.8" cy="588.0" rx="4.2" ry="4.9" fill="#131d0d"/>
<ellipse cx="763.9" cy="806.2" rx="3.9" ry="4.5" fill="#131d0d"/>
<ellipse cx="822.3" cy="752.2" rx="2.0" ry="2.3" fill="#131d0d"/>
<ellipse cx="767.9" cy="627.0" rx="4.2" ry="4.8" fill="#131d0d"/>
<ellipse cx="793.4" cy="808.1" rx="4.1" ry="4.8" fill="#131d0d"/>
<ellipse cx="820.3" cy="735.3" rx="3.8" ry="4.4" fill="#131d0d"/>
<ellipse cx="778.4" cy="805.7" rx="3.8" ry="4.4" fill="#131d0d"/>
<ellipse cx="906.1" cy="581.5" rx="4.2" ry="4.8" fill="#131d0d"/>
<ellipse cx="775.5" cy="677.3" rx="3.4" ry="3.9" fill="#131d0d"/>
<ellipse cx="813.1" cy="669.8" rx="2.4" ry="2.8" fill="#131d0d"/>
<ellipse cx="773.3" cy="616.9" rx="3.6" ry="4.1" fill="#131d0d"/>
<ellipse cx="850.7" cy="697.9" rx="2.5" ry="2.9" fill="#131d0d"/>
<ellipse cx="861.0" cy="830.3" rx="3.0" ry="3.5" fill="#131d0d"/>
<ellipse cx="843.9" cy="834.1" rx="2.3" ry="2.6" fill="#131d0d"/>
<ellipse cx="884.4" cy="869.2" rx="3.4" ry="4.0" fill="#131d0d"/>
<ellipse cx="894.0" cy="603.6" rx="3.0" ry="3.4" fill="#131d0d"/>
<ellipse cx="810.1" cy="712.7" rx="4.3" ry="4.9" fill="#131d0d"/>
<ellipse cx="904.9" cy="877.4" rx="3.0" ry="3.5" fill="#131d0d"/>
<ellipse cx="843.0" cy="799.8" rx="3.1" ry="3.6" fill="#131d0d"/>
<ellipse cx="809.5" cy="697.2" rx="2.3" ry="2.7" fill="#131d0d"/>
<ellipse cx="824.1" cy="881.3" rx="4.2" ry="4.8" fill="#131d0d"/>
<ellipse cx="866.6" cy="727.3" rx="2.8" ry="3.2" fill="#131d0d"/>
<ellipse cx="775.2" cy="655.8" rx="3.8" ry="4.4" fill="#131d0d"/>
<ellipse cx="907.5" cy="683.8" rx="3.8" ry="4.4" fill="#131d0d"/>
<ellipse cx="891.7" cy="788.8" rx="3.5" ry="4.1" fill="#131d0d"/>
<ellipse cx="889.1" cy="684.5" rx="3.6" ry="4.2" fill="#131d0d"/>
<ellipse cx="807.7" cy="723.0" rx="3.8" ry="4.3" fill="#131d0d"/>
<ellipse cx="877.5" cy="662.6" rx="4.2" ry="4.8" fill="#131d0d"/>
<ellipse cx="870.4" cy="752.9" rx="2.0" ry="2.3" fill="#131d0d"/>
<ellipse cx="853.0" cy="649.0" rx="3.5" ry="4.1" fill="#131d0d"/>
<ellipse cx="838.7" cy="827.3" rx="3.5" ry="4.0" fill="#131d0d"/>
<ellipse cx="895.6" cy="679.6" rx="3.5" ry="4.0" fill="#131d0d"/>
<ellipse cx="885.4" cy="830.9" rx="2.8" ry="3.2" fill="#131d0d"/>
<ellipse cx="903.3" cy="844.0" rx="3.6" ry="4.1" fill="#131d0d"/>
<ellipse cx="848.1" cy="736.7" rx="2.4" ry="2.7" fill="#131d0d"/>
<ellipse cx="902.2" cy="865.3" rx="3.1" ry="3.6" fill="#131d0d"/>
<ellipse cx="877.5" cy="796.7" rx="3.7" ry="4.2" fill="#131d0d"/>
<ellipse cx="858.7" cy="779.7" rx="3.0" ry="3.4" fill="#131d0d"/>
<ellipse cx="866.0" cy="814.0" rx="3.5" ry="4.0" fill="#131d0d"/>
<ellipse cx="882.5" cy="578.7" rx="2.4" ry="2.7" fill="#131d0d"/>
<ellipse cx="835.0" cy="774.8" rx="2.5" ry="2.9" fill="#131d0d"/>
<ellipse cx="876.6" cy="768.7" rx="2.1" ry="2.4" fill="#131d0d"/>
<ellipse cx="840.2" cy="641.3" rx="2.1" ry="2.4" fill="#131d0d"/>
<ellipse cx="782.7" cy="670.0" rx="2.4" ry="2.8" fill="#131d0d"/>
<ellipse cx="792.9" cy="581.2" rx="3.1" ry="3.5" fill="#131d0d"/>
<ellipse cx="824.7" cy="762.7" rx="3.4" ry="3.9" fill="#131d0d"/>
<ellipse cx="800.4" cy="854.5" rx="2.0" ry="2.3" fill="#131d0d"/>
<ellipse cx="828.9" cy="657.7" rx="2.9" ry="3.4" fill="#131d0d"/>
<ellipse cx="823.6" cy="581.4" rx="3.4" ry="3.9" fill="#131d0d"/>
<ellipse cx="776.1" cy="741.7" rx="2.8" ry="3.2" fill="#131d0d"/>
<ellipse cx="858.8" cy="871.9" rx="3.9" ry="4.5" fill="#131d0d"/>
<ellipse cx="831.2" cy="826.1" rx="3.5" ry="4.0" fill="#131d0d"/>
<ellipse cx="861.3" cy="747.6" rx="4.2" ry="4.8" fill="#131d0d"/>
<ellipse cx="819.7" cy="851.4" rx="2.0" ry="2.3" fill="#131d0d"/>
<ellipse cx="778.3" cy="748.2" rx="3.4" ry="3.9" fill="#131d0d"/>
<ellipse cx="783.9" cy="768.3" rx="4.0" ry="4.7" fill="#131d0d"/>
<ellipse cx="823.9" cy="706.0" rx="2.5" ry="2.9" fill="#131d0d"/>
<ellipse cx="809.6" cy="876.3" rx="2.9" ry="3.3" fill="#131d0d"/>
<ellipse cx="861.3" cy="651.8" rx="4.3" ry="4.9" fill="#131d0d"/>
<ellipse cx="844.4" cy="700.9" rx="2.7" ry="3.1" fill="#131d0d"/>
<ellipse cx="808.7" cy="720.2" rx="2.3" ry="2.6" fill="#131d0d"/>
<ellipse cx="865.7" cy="709.7" rx="2.7" ry="3.1" fill="#131d0d"/>
<ellipse cx="892.9" cy="830.4" rx="2.0" ry="2.3" fill="#131d0d"/>
<ellipse cx="850.5" cy="656.2" rx="4.2" ry="4.8" fill="#131d0d"/>
<ellipse cx="892.9" cy="647.4" rx="2.6" ry="3.0" fill="#131d0d"/>
<ellipse cx="840.7" cy="773.1" rx="3.4" ry="3.9" fill="#131d0d"/>
<ellipse cx="886.4" cy="607.2" rx="3.7" ry="4.3" fill="#131d0d"/>
<ellipse cx="811.1" cy="738.1" rx="2.8" ry="3.2" fill="#131d0d"/>
<ellipse cx="810.5" cy="736.9" rx="3.1" ry="3.5" fill="#131d0d"/>
<ellipse cx="821.4" cy="804.7" rx="3.4" ry="3.9" fill="#131d0d"/>
<ellipse cx="766.2" cy="649.5" rx="3.0" ry="3.5" fill="#131d0d"/>
<ellipse cx="852.8" cy="574.6" rx="3.8" ry="4.4" fill="#131d0d"/>
<ellipse cx="832.7" cy="751.3" rx="3.6" ry="4.2" fill="#131d0d"/>
<ellipse cx="867.5" cy="721.8" rx="4.1" ry="4.7" fill="#131d0d"/>
<ellipse cx="825.5" cy="693.4" rx="4.0" ry="4.6" fill="#131d0d"/>
<ellipse cx="901.1" cy="590.8" rx="3.9" ry="4.5" fill="#131d0d"/>
<ellipse cx="878.1" cy="706.3" rx="2.7" ry="3.1" fill="#131d0d"/>
<ellipse cx="892.7" cy="856.9" rx="2.3" ry="2.7" fill="#131d0d"/>
<ellipse cx="841.3" cy="743.0" rx="3.1" ry="3.6" fill="#131d0d"/>
<ellipse cx="859.6" cy="825.7" rx="2.2" ry="2.5" fill="#131d0d"/>
<ellipse cx="894.6" cy="779.0" rx="2.1" ry="2.4" fill="#131d0d"/>
<ellipse cx="882.8" cy="878.3" rx="4.3" ry="4.9" fill="#131d0d"/>
<ellipse cx="879.2" cy="585.4" rx="3.9" ry="4.5" fill="#131d0d"/>
<ellipse cx="782.9" cy="662.1" rx="4.1" ry="4.7" fill="#131d0d"/>
<ellipse cx="785.5" cy="762.3" rx="3.0" ry="3.4" fill="#131d0d"/>
<ellipse cx="787.4" cy="766.1" rx="2.1" ry="2.4" fill="#131d0d"/>
<ellipse cx="778.4" cy="689.4" rx="2.2" ry="2.5" fill="#131d0d"/>
<ellipse cx="769.8" cy="751.2" rx="3.7" ry="4.3" fill="#131d0d"/>
<ellipse cx="909.3" cy="612.3" rx="3.0" ry="3.4" fill="#131d0d"/>
<ellipse cx="813.5" cy="759.1" rx="3.1" ry="3.6" fill="#131d0d"/>
<ellipse cx="769.5" cy="789.6" rx="2.3" ry="2.7" fill="#131d0d"/>
<ellipse cx="867.3" cy="729.3" rx="4.1" ry="4.7" fill="#131d0d"/>
<ellipse cx="854.3" cy="765.6" rx="2.6" ry="3.0" fill="#131d0d"/>
<ellipse cx="853.8" cy="650.1" rx="3.7" ry="4.3" fill="#131d0d"/>
<ellipse cx="847.9" cy="612.1" rx="2.5" ry="2.9" fill="#131d0d"/>
<ellipse cx="823.1" cy="802.1" rx="2.4" ry="2.8" fill="#131d0d"/>
<ellipse cx="881.3" cy="776.3" rx="2.2" ry="2.5" fill="#131d0d"/>
<ellipse cx="873.6" cy="598.7" rx="2.3" ry="2.6" fill="#131d0d"/>
<ellipse cx="861.0" cy="645.2" rx="4.0" ry="4.6" fill="#131d0d"/>
<ellipse cx="841.7" cy="671.8" rx="3.8" ry="4.4" fill="#131d0d"/>
<ellipse cx="765.0" cy="798.4" rx="2.1" ry="2.4" fill="#131d0d"/>
<ellipse cx="875.8" cy="640.3" rx="2.3" ry="2.6" fill="#131d0d"/>
<ellipse cx="899.5" cy="614.0" rx="3.4" ry="4.0" fill="#131d0d"/>
<ellipse cx="816.7" cy="763.3" rx="2.8" ry="3.2" fill="#131d0d"/>
<ellipse cx="901.3" cy="774.1" rx="3.9" ry="4.4" fill="#131d0d"/>
<ellipse cx="833.7" cy="838.2" rx="3.2" ry="3.7" fill="#131d0d"/>
<ellipse cx="860.7" cy="750.6" rx="3.7" ry="4.3" fill="#131d0d"/>
<ellipse cx="765.6" cy="633.8" rx="2.1" ry="2.4" fill="#131d0d"/>
<ellipse cx="911.2" cy="721.5" rx="3.7" ry="4.3" fill="#131d0d"/>
<ellipse cx="760.1" cy="718.1" rx="4.0" ry="4.7" fill="#131d0d"/>
<ellipse cx="865.3" cy="705.0" rx="3.1" ry="3.5" fill="#131d0d"/>
<ellipse cx="777.0" cy="618.7" rx="2.4" ry="2.7" fill="#131d0d"/>
<ellipse cx="823.7" cy="691.5" rx="4.0" ry="4.6" fill="#131d0d"/>
<ellipse cx="785.9" cy="650.0" rx="2.6" ry="3.0" fill="#131d0d"/>
<ellipse cx="787.5" cy="660.4" rx="2.5" ry="2.9" fill="#131d0d"/>
<ellipse cx="874.5" cy="718.6" rx="4.2" ry="4.8" fill="#131d0d"/>
<ellipse cx="780.0" cy="780.6" rx="2.7" ry="3.1" fill="#131d0d"/>
<ellipse cx="874.7" cy="799.7" rx="2.4" ry="2.7" fill="#131d0d"/>
<ellipse cx="794.2" cy="577.9" rx="2.5" ry="2.9" fill="#131d0d"/>
<ellipse cx="773.3" cy="696.3" rx="4.2" ry="4.9" fill="#131d0d"/>
<ellipse cx="821.9" cy="668.2" rx="3.1" ry="3.5" fill="#131d0d"/>
<ellipse cx="882.0" cy="621.5" rx="2.6" ry="2.9" fill="#131d0d"/>
<ellipse cx="874.3" cy="866.3" rx="3.5" ry="4.0" fill="#131d0d"/>
<ellipse cx="833.2" cy="877.3" rx="2.0" ry="2.3" fill="#131d0d"/>
<ellipse cx="853.2" cy="881.7" rx="3.2" ry="3.7" fill="#131d0d"/>
<ellipse cx="843.5" cy="864.8" rx="2.1" ry="2.4" fill="#131d0d"/>
<ellipse cx="801.4" cy="585.9" rx="2.9" ry="3.4" fill="#131d0d"/>
<ellipse cx="770.2" cy="650.5" rx="2.9" ry="3.4" fill="#131d0d"/>
<ellipse cx="812.0" cy="586.2" rx="2.1" ry="2.4" fill="#131d0d"/>
<ellipse cx="846.5" cy="696.7" rx="3.2" ry="3.7" fill="#131d0d"/>
<ellipse cx="774.3" cy="668.9" rx="2.2" ry="2.6" fill="#131d0d"/>
<ellipse cx="852.1" cy="860.2" rx="3.4" ry="3.9" fill="#131d0d"/>
<ellipse cx="905.7" cy="637.5" rx="2.0" ry="2.3" fill="#131d0d"/>
<ellipse cx="851.7" cy="723.3" rx="3.3" ry="3.8" fill="#131d0d"/>
<ellipse cx="824.0" cy="766.9" rx="3.7" ry="4.2" fill="#131d0d"/>
<ellipse cx="836.3" cy="830.3" rx="2.5" ry="2.9" fill="#131d0d"/>
<ellipse cx="779.7" cy="668.2" rx="2.2" ry="2.5" fill="#131d0d"/>
<ellipse cx="891.3" cy="828.1" rx="2.7" ry="3.1" fill="#131d0d"/>
<ellipse cx="782.1" cy="595.8" rx="2.6" ry="2.9" fill="#131d0d"/>
<ellipse cx="774.3" cy="705.0" rx="3.3" ry="3.8" fill="#131d0d"/>
<ellipse cx="801.7" cy="589.4" rx="3.6" ry="4.2" fill="#131d0d"/>
<ellipse cx="768.2" cy="633.0" rx="2.7" ry="3.1" fill="#131d0d"/>
<ellipse cx="831.5" cy="668.9" rx="3.7" ry="4.3" fill="#131d0d"/>
<ellipse cx="854.5" cy="852.3" rx="3.5" ry="4.0" fill="#131d0d"/>
<ellipse cx="889.2" cy="751.0" rx="3.0" ry="3.5" fill="#131d0d"/>
<ellipse cx="898.9" cy="776.5" rx="4.2" ry="4.8" fill="#131d0d"/>
<ellipse cx="883.8" cy="790.9" rx="2.6" ry="3.0" fill="#131d0d"/>
<ellipse cx="898.1" cy="690.5" rx="2.3" ry="2.6" fill="#131d0d"/>
<ellipse cx="771.2" cy="623.3" rx="2.6" ry="3.0" fill="#131d0d"/>
<ellipse cx="874.9" cy="659.9" rx="2.1" ry="2.5" fill="#131d0d"/>
<ellipse cx="889.8" cy="745.5" rx="2.1" ry="2.4" fill="#131d0d"/>
<ellipse cx="768.6" cy="611.0" rx="2.8" ry="3.2" fill="#131d0d"/>
<ellipse cx="906.2" cy="869.0" rx="3.4" ry="3.9" fill="#131d0d"/>
<ellipse cx="821.6" cy="674.1" rx="2.0" ry="2.3" fill="#131d0d"/>
<ellipse cx="859.4" cy="830.5" rx="3.7" ry="4.2" fill="#131d0d"/>
<ellipse cx="776.2" cy="737.0" rx="2.4" ry="2.8" fill="#131d0d"/>
<ellipse cx="880.6" cy="710.6" rx="4.2" ry="4.8" fill="#131d0d"/>
<ellipse cx="895.1" cy="607.2" rx="2.7" ry="3.1" fill="#131d0d"/>
<ellipse cx="833.8" cy="709.0" rx="3.8" ry="4.3" fill="#131d0d"/>
<ellipse cx="858.1" cy="721.8" rx="4.0" ry="4.6" fill="#131d0d"/>
<ellipse cx="826.8" cy="637.9" rx="2.6" ry="3.0" fill="#131d0d"/>
<ellipse cx="820.7" cy="806.6" rx="2.6" ry="2.9" fill="#131d0d"/>
<ellipse cx="904.5" cy="764.7" rx="2.9" ry="3.4" fill="#131d0d"/>
<ellipse cx="788.8" cy="601.1" rx="3.7" ry="4.2" fill="#131d0d"/>
<ellipse cx="913.0" cy="632.8" rx="3.8" ry="4.4" fill="#131d0d"/>
<ellipse cx="815.1" cy="785.1" rx="4.0" ry="4.6" fill="#131d0d"/>
<ellipse cx="865.9" cy="822.1" rx="2.9" ry="3.3" fill="#131d0d"/>
<ellipse cx="761.7" cy="731.2" rx="3.3" ry="3.9" fill="#131d0d"/>
<ellipse cx="813.9" cy="578.5" rx="2.7" ry="3.1" fill="#131d0d"/>
<ellipse cx="825.1" cy="720.0" rx="3.6" ry="4.2" fill="#131d0d"/>
<ellipse cx="827.8" cy="879.5" rx="3.9" ry="4.5" fill="#131d0d"/>
<ellipse cx="873.9" cy="739.1" rx="3.8" ry="4.4" fill="#131d0d"/>
<ellipse cx="821.7" cy="757.0" rx="3.6" ry="4.1" fill="#131d0d"/>
<ellipse cx="848.8" cy="659.5" rx="2.2" ry="2.5" fill="#131d0d"/>
<ellipse cx="774.8" cy="682.1" rx="3.3" ry="3.8" fill="#131d0d"/>
<ellipse cx="889.1" cy="795.1" rx="2.7" ry="3.1" fill="#131d0d"/>
<ellipse cx="881.7" cy="592.7" rx="3.7" ry="4.3" fill="#131d0d"/>
<ellipse cx="873.9" cy="871.4" rx="4.1" ry="4.7" fill="#131d0d"/>
<ellipse cx="876.9" cy="834.1" rx="3.7" ry="4.3" fill="#131d0d"/>
<ellipse cx="863.9" cy="635.8" rx="3.2" ry="3.7" fill="#131d0d"/>
<ellipse cx="912.3" cy="645.3" rx="4.2" ry="4.9" fill="#131d0d"/>
<ellipse cx="852.5" cy="693.9" rx="2.0" ry="2.3" fill="#131d0d"/>
<ellipse cx="871.0" cy="853.4" rx="4.1" ry="4.7" fill="#131d0d"/>
<ellipse cx="864.3" cy="691.8" rx="2.3" ry="2.6" fill="#131d0d"/>
<ellipse cx="877.1" cy="744.3" rx="3.6" ry="4.2" fill="#131d0d"/>
<ellipse cx="823.6" cy="849.3" rx="2.5" ry="2.9" fill="#131d0d"/>
<ellipse cx="865.8" cy="852.6" rx="2.4" ry="2.7" fill="#131d0d"/>
<ellipse cx="867.6" cy="811.4" rx="2.5" ry="2.9" fill="#131d0d"/>
<ellipse cx="770.7" cy="748.3" rx="3.9" ry="4.5" fill="#131d0d"/>
<ellipse cx="909.4" cy="799.3" rx="3.0" ry="3.4" fill="#131d0d"/>
<ellipse cx="832.3" cy="736.6" rx="4.1" ry="4.7" fill="#131d0d"/>
<ellipse cx="862.9" cy="874.5" rx="2.4" ry="2.8" fill="#131d0d"/>
<ellipse cx="765.2" cy="606.4" rx="3.3" ry="3.8" fill="#131d0d"/>
<ellipse cx="862.6" cy="627.9" rx="2.4" ry="2.8" fill="#131d0d"/>
<ellipse cx="861.1" cy="773.6" rx="3.6" ry="4.1" fill="#131d0d"/>
<ellipse cx="883.9" cy="589.3" rx="3.1" ry="3.6" fill="#131d0d"/>
<ellipse cx="901.9" cy="871.5" rx="2.7" ry="3.1" fill="#131d0d"/>
<ellipse cx="904.6" cy="773.2" rx="4.1" ry="4.8" fill="#131d0d"/>
<ellipse cx="902.9" cy="720.2" rx="2.2" ry="2.6" fill="#131d0d"/>
<ellipse cx="792.9" cy="619.3" rx="2.2" ry="2.5" fill="#131d0d"/>
<ellipse cx="785.8" cy="764.0" rx="2.2" ry="2.6" fill="#131d0d"/>
<ellipse cx="888.9" cy="801.9" rx="3.9" ry="4.5" fill="#131d0d"/>
<ellipse cx="896.6" cy="794.6" rx="4.1" ry="4.7" fill="#131d0d"/>
<ellipse cx="777.5" cy="590.3" rx="2.5" ry="2.8" fill="#131d0d"/>
<ellipse cx="823.7" cy="714.5" rx="3.6" ry="4.1" fill="#131d0d"/>
<ellipse cx="886.3" cy="596.4" rx="2.9" ry="3.4" fill="#131d0d"/>
<ellipse cx="852.4" cy="688.2" rx="2.3" ry="2.6" fill="#131d0d"/>
<ellipse cx="861.5" cy="687.9" rx="3.6" ry="4.1" fill="#131d0d"/>
<ellipse cx="844.2" cy="873.2" rx="4.2" ry="4.8" fill="#131d0d"/>
<ellipse cx="772.3" cy="809.3" rx="3.7" ry="4.2" fill="#131d0d"/>
<ellipse cx="810.3" cy="606.8" rx="3.1" ry="3.6" fill="#131d0d"/>
<ellipse cx="820.2" cy="802.3" rx="4.1" ry="4.7" fill="#131d0d"/>
<ellipse cx="825.0" cy="661.5" rx="3.1" ry="3.6" fill="#131d0d"/>
<ellipse cx="878.5" cy="818.5" rx="3.3" ry="3.8" fill="#131d0d"/>
<ellipse cx="810.3" cy="676.1" rx="4.0" ry="4.5" fill="#131d0d"/>
<ellipse cx="848.3" cy="585.9" rx="3.0" ry="3.4" fill="#131d0d"/>
<ellipse cx="772.5" cy="655.4" rx="2.2" ry="2.6" fill="#131d0d"/>
<ellipse cx="841.2" cy="880.2" rx="3.2" ry="3.7" fill="#131d0d"/>
<ellipse cx="825.7" cy="864.2" rx="2.2" ry="2.5" fill="#131d0d"/>
<ellipse cx="820.5" cy="825.4" rx="2.0" ry="2.3" fill="#131d0d"/>
<ellipse cx="890.2" cy="683.7" rx="2.0" ry="2.3" fill="#131d0d"/>
<ellipse cx="825.1" cy="732.8" rx="2.1" ry="2.4" fill="#131d0d"/>
<ellipse cx="835.2" cy="718.6" rx="2.2" ry="2.5" fill="#131d0d"/>
<ellipse cx="807.5" cy="870.7" rx="3.6" ry="4.1" fill="#131d0d"/>
<ellipse cx="846.3" cy="586.7" rx="2.9" ry="3.3" fill="#131d0d"/>
<ellipse cx="892.3" cy="706.9" rx="3.4" ry="3.9" fill="#131d0d"/>
<ellipse cx="868.1" cy="581.4" rx="2.1" ry="2.4" fill="#131d0d"/>
<ellipse cx="890.8" cy="700.2" rx="4.0" ry="4.6" fill="#131d0d"/>
<ellipse cx="900.4" cy="858.3" rx="2.9" ry="3.3" fill="#131d0d"/>
<ellipse cx="911.6" cy="616.7" rx="3.8" ry="4.4" fill="#131d0d"/>
<ellipse cx="831.8" cy="876.2" rx="4.3" ry="4.9" fill="#131d0d"/>
<ellipse cx="781.0" cy="623.3" rx="3.1" ry="3.5" fill="#131d0d"/>
<ellipse cx="772.6" cy="690.1" rx="4.1" ry="4.7" fill="#131d0d"/>
<ellipse cx="910.5" cy="631.9" rx="2.0" ry="2.3" fill="#131d0d"/>
<ellipse cx="900.8" cy="872.6" rx="3.4" ry="3.9" fill="#131d0d"/>
<ellipse cx="783.2" cy="644.5" rx="4.1" ry="4.7" fill="#131d0d"/>
<ellipse cx="823.4" cy="814.2" rx="2.3" ry="2.7" fill="#131d0d"/>
<ellipse cx="848.1" cy="877.1" rx="3.6" ry="4.2" fill="#131d0d"/>
<ellipse cx="775.3" cy="605.0" rx="3.5" ry="4.0" fill="#131d0d"/>
<ellipse cx="823.7" cy="686.1" rx="3.1" ry="3.6" fill="#131d0d"/>
<ellipse cx="858.9" cy="874.2" rx="2.6" ry="2.9" fill="#131d0d"/>
<ellipse cx="856.7" cy="652.9" rx="3.3" ry="3.7" fill="#131d0d"/>
<ellipse cx="884.3" cy="612.1" rx="3.1" ry="3.6" fill="#131d0d"/>
<ellipse cx="880.0" cy="572.6" rx="3.8" ry="4.3" fill="#131d0d"/>
<ellipse cx="831.2" cy="728.8" rx="3.4" ry="3.9" fill="#131d0d"/>
<ellipse cx="894.8" cy="587.7" rx="3.2" ry="3.6" fill="#131d0d"/>
<ellipse cx="766.5" cy="691.4" rx="2.8" ry="3.2" fill="#131d0d"/>
<ellipse cx="763.6" cy="663.8" rx="3.0" ry="3.5" fill="#131d0d"/>
<ellipse cx="871.3" cy="861.3" rx="2.9" ry="3.3" fill="#131d0d"/>
<ellipse cx="850.1" cy="794.7" rx="4.2" ry="4.8" fill="#131d0d"/>
<ellipse cx="836.3" cy="801.9" rx="3.2" ry="3.7" fill="#131d0d"/>
<ellipse cx="826.1" cy="861.2" rx="2.7" ry="3.1" fill="#131d0d"/>
<ellipse cx="853.8" cy="831.3" rx="2.3" ry="2.7" fill="#131d0d"/>
<ellipse cx="819.7" cy="725.7" rx="3.3" ry="3.8" fill="#131d0d"/>
<ellipse cx="770.2" cy="597.7" rx="2.8" ry="3.2" fill="#131d0d"/>
<ellipse cx="893.2" cy="803.5" rx="2.6" ry="3.0" fill="#131d0d"/>
<ellipse cx="901.0" cy="767.1" rx="2.9" ry="3.3" fill="#131d0d"/>
<ellipse cx="866.9" cy="647.4" rx="2.6" ry="3.0" fill="#131d0d"/>
<ellipse cx="909.0" cy="708.2" rx="4.1" ry="4.7" fill="#131d0d"/>
<ellipse cx="790.1" cy="613.3" rx="2.1" ry="2.4" fill="#131d0d"/>
<ellipse cx="885.8" cy="746.8" rx="2.0" ry="2.3" fill="#131d0d"/>
<ellipse cx="844.0" cy="844.5" rx="2.1" ry="2.4" fill="#131d0d"/>
<ellipse cx="860.1" cy="607.0" rx="3.7" ry="4.2" fill="#131d0d"/>
<ellipse cx="863.9" cy="762.8" rx="2.5" ry="2.9" fill="#131d0d"/>
<ellipse cx="770.9" cy="785.5" rx="2.2" ry="2.5" fill="#131d0d"/>
<ellipse cx="771.4" cy="715.0" rx="3.5" ry="4.0" fill="#131d0d"/>
<ellipse cx="771.8" cy="772.6" rx="3.9" ry="4.5" fill="#131d0d"/>
<ellipse cx="780.5" cy="807.7" rx="2.6" ry="3.0" fill="#131d0d"/>
<ellipse cx="810.8" cy="570.5" rx="3.7" ry="4.3" fill="#131d0d"/>
<ellipse cx="847.7" cy="854.1" rx="3.1" ry="3.5" fill="#131d0d"/>
<ellipse cx="786.4" cy="638.2" rx="2.6" ry="3.0" fill="#131d0d"/>
<ellipse cx="775.0" cy="681.1" rx="2.2" ry="2.5" fill="#131d0d"/>
<ellipse cx="832.3" cy="765.8" rx="3.5" ry="4.0" fill="#131d0d"/>
<ellipse cx="789.7" cy="613.7" rx="3.1" ry="3.6" fill="#131d0d"/>
<ellipse cx="876.8" cy="710.9" rx="3.3" ry="3.8" fill="#131d0d"/>
<ellipse cx="851.1" cy="853.6" rx="3.3" ry="3.8" fill="#131d0d"/>
<ellipse cx="872.6" cy="702.2" rx="3.8" ry="4.4" fill="#131d0d"/>
<ellipse cx="902.1" cy="662.5" rx="2.2" ry="2.6" fill="#131d0d"/>
<ellipse cx="911.2" cy="653.3" rx="3.4" ry="4.0" fill="#131d0d"/>
<ellipse cx="868.9" cy="871.2" rx="2.3" ry="2.6" fill="#131d0d"/>
<ellipse cx="890.9" cy="676.0" rx="2.2" ry="2.6" fill="#131d0d"/>
<ellipse cx="867.4" cy="836.0" rx="3.3" ry="3.8" fill="#131d0d"/>
<ellipse cx="825.3" cy="770.4" rx="3.7" ry="4.2" fill="#131d0d"/>
<ellipse cx="804.3" cy="698.6" rx="2.8" ry="3.2" fill="#131d0d"/>
<ellipse cx="776.3" cy="590.3" rx="3.6" ry="4.2" fill="#131d0d"/>
<ellipse cx="829.8" cy="843.9" rx="2.1" ry="2.5" fill="#131d0d"/>
<ellipse cx="777.7" cy="701.1" rx="2.5" ry="2.9" fill="#131d0d"/>
<ellipse cx="764.6" cy="748.0" rx="2.7" ry="3.1" fill="#131d0d"/>
<ellipse cx="778.3" cy="731.1" rx="4.1" ry="4.8" fill="#131d0d"/>
<ellipse cx="777.5" cy="812.1" rx="2.3" ry="2.6" fill="#131d0d"/>
<ellipse cx="851.4" cy="596.4" rx="4.3" ry="4.9" fill="#131d0d"/>
<ellipse cx="852.3" cy="707.8" rx="2.6" ry="3.0" fill="#131d0d"/>
<ellipse cx="853.7" cy="876.5" rx="3.0" ry="3.4" fill="#131d0d"/>
<ellipse cx="867.8" cy="859.4" rx="2.7" ry="3.2" fill="#131d0d"/>
<ellipse cx="897.9" cy="736.6" rx="2.3" ry="2.7" fill="#131d0d"/>
<ellipse cx="839.2" cy="709.6" rx="4.1" ry="4.7" fill="#131d0d"/>
<ellipse cx="857.6" cy="727.6" rx="2.7" ry="3.1" fill="#131d0d"/>
<ellipse cx="886.5" cy="650.7" rx="3.1" ry="3.5" fill="#131d0d"/>
<ellipse cx="889.0" cy="760.5" rx="2.3" ry="2.7" fill="#131d0d"/>
<ellipse cx="794.5" cy="788.9" rx="3.7" ry="4.2" fill="#131d0d"/>
<ellipse cx="782.7" cy="622.8" rx="2.2" ry="2.5" fill="#131d0d"/>
<ellipse cx="835.9" cy="765.2" rx="4.0" ry="4.6" fill="#131d0d"/>
<ellipse cx="787.7" cy="790.1" rx="2.2" ry="2.6" fill="#131d0d"/>
<ellipse cx="858.7" cy="649.3" rx="2.8" ry="3.2" fill="#131d0d"/>
<ellipse cx="768.9" cy="797.0" rx="2.3" ry="2.6" fill="#131d0d"/>
<ellipse cx="889.9" cy="676.0" rx="3.4" ry="3.9" fill="#131d0d"/>
<ellipse cx="868.6" cy="723.9" rx="4.0" ry="4.6" fill="#131d0d"/>
<ellipse cx="816.7" cy="846.2" rx="2.3" ry="2.7" fill="#131d0d"/>
<ellipse cx="831.4" cy="700.6" rx="4.2" ry="4.9" fill="#131d0d"/>
<ellipse cx="781.8" cy="776.3" rx="3.7" ry="4.3" fill="#131d0d"/>
<ellipse cx="883.8" cy="570.3" rx="4.2" ry="4.8" fill="#131d0d"/>
<ellipse cx="813.1" cy="838.7" rx="3.5" ry="4.0" fill="#131d0d"/>
<ellipse cx="831.5" cy="833.9" rx="3.6" ry="4.1" fill="#131d0d"/>
<ellipse cx="817.8" cy="800.5" rx="3.2" ry="3.6" fill="#131d0d"/>
<ellipse cx="881.0" cy="763.5" rx="3.8" ry="4.4" fill="#131d0d"/>
<ellipse cx="891.2" cy="833.7" rx="2.1" ry="2.4" fill="#131d0d"/>
<ellipse cx="817.8" cy="481.8" rx="3.9" ry="4.5" fill="#131d0d"/>
<ellipse cx="877.2" cy="369.2" rx="4.0" ry="4.6" fill="#131d0d"/>
<ellipse cx="901.0" cy="311.6" rx="3.7" ry="4.2" fill="#131d0d"/>
<ellipse cx="904.3" cy="317.4" rx="3.4" ry="3.9" fill="#131d0d"/>
<ellipse cx="931.9" cy="250.6" rx="3.1" ry="3.6" fill="#131d0d"/>
<ellipse cx="855.5" cy="413.0" rx="3.6" ry="4.1" fill="#131d0d"/>
<ellipse cx="797.8" cy="529.0" rx="3.6" ry="4.1" fill="#131d0d"/>
<ellipse cx="915.0" cy="293.1" rx="3.2" ry="3.7" fill="#131d0d"/>
<ellipse cx="842.9" cy="523.4" rx="3.3" ry="3.8" fill="#131d0d"/>
<ellipse cx="913.8" cy="472.7" rx="2.5" ry="2.9" fill="#131d0d"/>
<ellipse cx="892.1" cy="338.2" rx="3.6" ry="4.2" fill="#131d0d"/>
<ellipse cx="804.7" cy="549.4" rx="3.1" ry="3.6" fill="#131d0d"/>
<ellipse cx="922.4" cy="248.2" rx="2.9" ry="3.4" fill="#131d0d"/>
<ellipse cx="868.7" cy="417.8" rx="3.3" ry="3.8" fill="#131d0d"/>
<ellipse cx="829.3" cy="559.0" rx="2.8" ry="3.2" fill="#131d0d"/>
<ellipse cx="817.2" cy="507.3" rx="3.2" ry="3.6" fill="#131d0d"/>
<ellipse cx="892.2" cy="358.1" rx="3.6" ry="4.1" fill="#131d0d"/>
<ellipse cx="906.7" cy="285.5" rx="3.9" ry="4.5" fill="#131d0d"/>
<ellipse cx="857.4" cy="389.8" rx="3.2" ry="3.7" fill="#131d0d"/>
<ellipse cx="819.3" cy="527.9" rx="2.3" ry="2.7" fill="#131d0d"/>
<ellipse cx="891.6" cy="355.6" rx="2.4" ry="2.8" fill="#131d0d"/>
<ellipse cx="796.0" cy="543.8" rx="2.8" ry="3.2" fill="#131d0d"/>
<ellipse cx="913.8" cy="285.7" rx="4.0" ry="4.6" fill="#131d0d"/>
<ellipse cx="836.4" cy="546.7" rx="3.1" ry="3.6" fill="#131d0d"/>
<ellipse cx="838.1" cy="480.9" rx="3.4" ry="3.9" fill="#131d0d"/>
<ellipse cx="853.5" cy="456.1" rx="2.8" ry="3.2" fill="#131d0d"/>
<ellipse cx="869.0" cy="444.2" rx="3.1" ry="3.6" fill="#131d0d"/>
<ellipse cx="901.6" cy="348.3" rx="4.0" ry="4.6" fill="#131d0d"/>
<ellipse cx="910.5" cy="485.2" rx="2.6" ry="2.9" fill="#131d0d"/>
<ellipse cx="786.3" cy="560.8" rx="3.0" ry="3.5" fill="#131d0d"/>
<ellipse cx="898.9" cy="327.7" rx="3.4" ry="3.9" fill="#131d0d"/>
<ellipse cx="900.3" cy="308.1" rx="2.7" ry="3.1" fill="#131d0d"/>
<ellipse cx="853.3" cy="405.8" rx="3.8" ry="4.3" fill="#131d0d"/>
<ellipse cx="900.9" cy="357.2" rx="3.2" ry="3.7" fill="#131d0d"/>
<ellipse cx="908.1" cy="333.5" rx="2.6" ry="3.0" fill="#131d0d"/>
<ellipse cx="883.4" cy="562.5" rx="3.1" ry="3.6" fill="#131d0d"/>
<ellipse cx="918.5" cy="256.4" rx="2.4" ry="2.8" fill="#131d0d"/>
<ellipse cx="858.1" cy="467.9" rx="2.3" ry="2.7" fill="#131d0d"/>
<ellipse cx="889.5" cy="327.6" rx="2.8" ry="3.2" fill="#131d0d"/>
<ellipse cx="873.9" cy="371.2" rx="3.2" ry="3.7" fill="#131d0d"/>
<ellipse cx="970.1" cy="249.4" rx="2.7" ry="3.1" fill="#131d0d"/>
<ellipse cx="922.7" cy="263.7" rx="3.3" ry="3.8" fill="#131d0d"/>
<ellipse cx="888.6" cy="336.4" rx="2.2" ry="2.5" fill="#131d0d"/>
<ellipse cx="900.0" cy="293.2" rx="2.8" ry="3.3" fill="#131d0d"/>
<ellipse cx="841.4" cy="468.9" rx="2.8" ry="3.3" fill="#131d0d"/>
<ellipse cx="859.9" cy="465.4" rx="2.2" ry="2.5" fill="#131d0d"/>
<ellipse cx="899.6" cy="342.7" rx="3.0" ry="3.4" fill="#131d0d"/>
<ellipse cx="861.5" cy="452.9" rx="3.7" ry="4.2" fill="#131d0d"/>
<ellipse cx="912.6" cy="312.1" rx="3.4" ry="3.9" fill="#131d0d"/>
<ellipse cx="915.9" cy="271.3" rx="3.8" ry="4.4" fill="#131d0d"/>
<ellipse cx="828.5" cy="548.4" rx="3.3" ry="3.8" fill="#131d0d"/>
<ellipse cx="866.2" cy="388.8" rx="3.4" ry="3.9" fill="#131d0d"/>
<ellipse cx="872.7" cy="420.8" rx="2.5" ry="2.9" fill="#131d0d"/>
<ellipse cx="882.0" cy="358.5" rx="2.2" ry="2.6" fill="#131d0d"/>
<ellipse cx="884.1" cy="372.4" rx="4.0" ry="4.6" fill="#131d0d"/>
<ellipse cx="795.7" cy="561.7" rx="4.1" ry="4.7" fill="#131d0d"/>
<ellipse cx="868.6" cy="442.1" rx="3.7" ry="4.3" fill="#131d0d"/>
<ellipse cx="900.5" cy="328.6" rx="3.4" ry="3.9" fill="#131d0d"/>
<ellipse cx="836.8" cy="442.5" rx="3.6" ry="4.2" fill="#131d0d"/>
<ellipse cx="841.2" cy="473.0" rx="3.8" ry="4.3" fill="#131d0d"/>
<ellipse cx="813.5" cy="518.1" rx="3.1" ry="3.6" fill="#131d0d"/>
<ellipse cx="903.9" cy="322.4" rx="3.6" ry="4.2" fill="#131d0d"/>
<ellipse cx="837.9" cy="552.0" rx="3.1" ry="3.6" fill="#131d0d"/>
<ellipse cx="859.0" cy="395.8" rx="2.5" ry="2.9" fill="#131d0d"/>
<ellipse cx="852.8" cy="401.7" rx="3.8" ry="4.4" fill="#131d0d"/>
<ellipse cx="812.2" cy="511.1" rx="3.1" ry="3.5" fill="#131d0d"/>
<ellipse cx="899.2" cy="304.8" rx="2.9" ry="3.3" fill="#131d0d"/>
<ellipse cx="830.5" cy="562.5" rx="4.1" ry="4.7" fill="#131d0d"/>
<ellipse cx="883.4" cy="378.6" rx="2.2" ry="2.5" fill="#131d0d"/>
<ellipse cx="918.7" cy="284.2" rx="2.8" ry="3.2" fill="#131d0d"/>
<ellipse cx="803.5" cy="563.8" rx="3.2" ry="3.6" fill="#131d0d"/>
<ellipse cx="890.6" cy="342.2" rx="3.9" ry="4.5" fill="#131d0d"/>
<ellipse cx="903.9" cy="347.5" rx="4.0" ry="4.6" fill="#131d0d"/>
<ellipse cx="891.1" cy="381.8" rx="3.9" ry="4.4" fill="#131d0d"/>
<ellipse cx="842.3" cy="505.5" rx="3.3" ry="3.8" fill="#131d0d"/>
<ellipse cx="913.9" cy="290.4" rx="4.1" ry="4.7" fill="#131d0d"/>
<ellipse cx="878.9" cy="382.5" rx="2.8" ry="3.2" fill="#131d0d"/>
<ellipse cx="876.4" cy="412.6" rx="3.0" ry="3.5" fill="#131d0d"/>
<ellipse cx="911.8" cy="279.3" rx="3.2" ry="3.7" fill="#131d0d"/>
<ellipse cx="875.7" cy="370.7" rx="3.5" ry="4.1" fill="#131d0d"/>
<ellipse cx="863.9" cy="375.7" rx="3.1" ry="3.6" fill="#131d0d"/>
<ellipse cx="886.9" cy="328.8" rx="3.2" ry="3.6" fill="#131d0d"/>
<ellipse cx="916.7" cy="268.0" rx="4.1" ry="4.8" fill="#131d0d"/>
<ellipse cx="814.2" cy="530.4" rx="2.3" ry="2.6" fill="#131d0d"/>
<ellipse cx="887.6" cy="382.2" rx="2.7" ry="3.1" fill="#131d0d"/>
<ellipse cx="854.4" cy="395.9" rx="2.8" ry="3.3" fill="#131d0d"/>
<ellipse cx="843.9" cy="541.8" rx="2.8" ry="3.2" fill="#131d0d"/>
<ellipse cx="841.6" cy="497.4" rx="3.0" ry="3.5" fill="#131d0d"/>
<ellipse cx="801.9" cy="549.1" rx="4.1" ry="4.7" fill="#131d0d"/>
<ellipse cx="930.5" cy="255.9" rx="2.6" ry="3.0" fill="#131d0d"/>
<ellipse cx="916.5" cy="282.4" rx="3.0" ry="3.4" fill="#131d0d"/>
<ellipse cx="900.9" cy="300.5" rx="2.9" ry="3.3" fill="#131d0d"/>
<ellipse cx="896.9" cy="299.1" rx="3.1" ry="3.5" fill="#131d0d"/>
<ellipse cx="819.8" cy="499.3" rx="3.6" ry="4.2" fill="#131d0d"/>
<ellipse cx="818.7" cy="492.4" rx="3.3" ry="3.8" fill="#131d0d"/>
<ellipse cx="805.4" cy="547.7" rx="2.6" ry="3.0" fill="#131d0d"/>
<ellipse cx="800.2" cy="562.5" rx="4.2" ry="4.8" fill="#131d0d"/>
<ellipse cx="886.4" cy="348.0" rx="3.6" ry="4.2" fill="#131d0d"/>
<ellipse cx="871.4" cy="425.8" rx="2.4" ry="2.7" fill="#131d0d"/>
<ellipse cx="912.1" cy="280.9" rx="4.2" ry="4.8" fill="#131d0d"/>
<ellipse cx="845.4" cy="430.1" rx="4.2" ry="4.8" fill="#131d0d"/>
<ellipse cx="830.6" cy="498.2" rx="3.4" ry="3.9" fill="#131d0d"/>
<ellipse cx="904.9" cy="282.7" rx="2.3" ry="2.7" fill="#131d0d"/>
<ellipse cx="886.5" cy="336.0" rx="3.0" ry="3.4" fill="#131d0d"/>
<ellipse cx="917.9" cy="288.1" rx="3.5" ry="4.1" fill="#131d0d"/>
<ellipse cx="913.4" cy="278.0" rx="4.2" ry="4.8" fill="#131d0d"/>
<ellipse cx="879.5" cy="405.0" rx="3.3" ry="3.8" fill="#131d0d"/>
<ellipse cx="913.8" cy="288.9" rx="2.3" ry="2.6" fill="#131d0d"/>
<ellipse cx="857.8" cy="477.1" rx="3.8" ry="4.4" fill="#131d0d"/>
<ellipse cx="871.8" cy="416.6" rx="3.5" ry="4.1" fill="#131d0d"/>
</g>
<g fill="#9a8c64" opacity="0.8">
<rect x="865.9" y="882.0" width="1.8" height="1.9"/>
<rect x="780.6" y="785.4" width="1.3" height="2.7"/>
<rect x="784.1" y="630.1" width="2.9" height="2.1"/>
<rect x="884.5" y="678.9" width="1.6" height="1.9"/>
<rect x="922.2" y="630.5" width="2.8" height="2.8"/>
<rect x="872.3" y="653.7" width="2.5" height="2.8"/>
<rect x="857.8" y="639.3" width="2.3" height="2.9"/>
<rect x="857.5" y="617.1" width="1.6" height="2.3"/>
<rect x="767.9" y="570.4" width="1.9" height="1.7"/>
<rect x="841.4" y="593.1" width="2.2" height="2.4"/>
<rect x="812.3" y="753.2" width="2.1" height="2.6"/>
<rect x="855.1" y="771.0" width="2.2" height="2.7"/>
<rect x="775.9" y="605.9" width="2.8" height="2.7"/>
<rect x="761.3" y="851.6" width="2.3" height="2.7"/>
<rect x="875.7" y="688.5" width="1.4" height="2.6"/>
<rect x="877.2" y="718.1" width="1.7" height="1.9"/>
<rect x="914.4" y="715.9" width="1.6" height="3.0"/>
<rect x="921.4" y="625.7" width="1.6" height="2.5"/>
<rect x="823.8" y="719.3" width="2.4" height="1.7"/>
<rect x="858.1" y="634.3" width="1.6" height="2.2"/>
<rect x="830.6" y="851.8" width="1.5" height="2.8"/>
<rect x="777.5" y="669.6" width="3.0" height="1.9"/>
<rect x="897.9" y="877.6" width="2.5" height="1.5"/>
<rect x="831.2" y="622.6" width="1.6" height="1.8"/>
<rect x="787.4" y="784.1" width="2.1" height="1.7"/>
<rect x="802.0" y="614.8" width="1.4" height="2.0"/>
<rect x="772.4" y="734.6" width="1.7" height="2.6"/>
<rect x="804.0" y="839.7" width="2.9" height="2.9"/>
<rect x="797.6" y="862.6" width="2.0" height="2.8"/>
<rect x="836.6" y="740.4" width="1.7" height="2.6"/>
<rect x="820.7" y="848.4" width="2.5" height="2.0"/>
<rect x="765.1" y="654.6" width="2.0" height="1.9"/>
<rect x="856.1" y="571.6" width="2.0" height="2.8"/>
<rect x="917.3" y="786.9" width="2.4" height="2.3"/>
<rect x="924.9" y="818.9" width="2.0" height="2.1"/>
<rect x="915.0" y="743.8" width="2.3" height="1.8"/>
<rect x="869.6" y="723.9" width="2.9" height="3.0"/>
<rect x="924.4" y="869.5" width="1.3" height="1.3"/>
<rect x="816.0" y="830.4" width="2.2" height="1.7"/>
<rect x="776.6" y="648.8" width="1.4" height="1.5"/>
<rect x="882.9" y="630.9" width="1.5" height="2.3"/>
<rect x="781.5" y="832.5" width="2.4" height="2.8"/>
<rect x="879.8" y="800.2" width="1.7" height="2.0"/>
<rect x="822.7" y="693.5" width="2.8" height="2.0"/>
<rect x="891.9" y="768.7" width="1.3" height="1.6"/>
<rect x="855.3" y="818.6" width="1.6" height="1.6"/>
<rect x="822.2" y="714.6" width="2.0" height="2.9"/>
<rect x="860.3" y="657.6" width="1.8" height="2.1"/>
<rect x="770.7" y="776.8" width="2.8" height="2.8"/>
<rect x="858.5" y="691.2" width="2.2" height="2.2"/>
<rect x="789.1" y="740.2" width="2.1" height="1.6"/>
<rect x="833.1" y="833.4" width="2.4" height="1.8"/>
<rect x="851.2" y="663.9" width="2.0" height="1.9"/>
<rect x="863.5" y="846.7" width="1.9" height="2.2"/>
<rect x="852.7" y="780.2" width="1.6" height="1.6"/>
<rect x="912.2" y="615.8" width="2.4" height="1.7"/>
<rect x="841.0" y="712.2" width="1.6" height="1.5"/>
<rect x="918.0" y="582.2" width="1.5" height="2.5"/>
<rect x="888.1" y="879.2" width="1.6" height="2.5"/>
<rect x="825.4" y="884.3" width="2.3" height="2.8"/>
<rect x="869.4" y="611.5" width="2.0" height="2.5"/>
<rect x="785.2" y="597.7" width="3.0" height="2.9"/>
<rect x="867.4" y="590.0" width="2.5" height="3.0"/>
<rect x="889.1" y="795.3" width="2.0" height="2.3"/>
<rect x="912.9" y="727.3" width="1.3" height="1.5"/>
<rect x="917.1" y="793.5" width="2.9" height="1.5"/>
<rect x="777.4" y="785.2" width="2.0" height="2.0"/>
<rect x="798.4" y="810.4" width="2.6" height="2.5"/>
<rect x="830.9" y="724.6" width="1.9" height="2.0"/>
<rect x="813.8" y="717.7" width="2.9" height="2.6"/>
<rect x="782.3" y="781.2" width="2.7" height="1.8"/>
<rect x="906.7" y="866.2" width="1.3" height="2.3"/>
<rect x="822.8" y="716.9" width="2.2" height="2.7"/>
<rect x="864.1" y="849.8" width="1.6" height="2.6"/>
<rect x="892.5" y="751.9" width="1.6" height="2.8"/>
<rect x="841.1" y="782.3" width="3.0" height="1.8"/>
<rect x="849.7" y="742.1" width="1.7" height="2.2"/>
<rect x="919.4" y="789.7" width="1.7" height="2.4"/>
<rect x="861.5" y="686.1" width="2.4" height="1.9"/>
<rect x="888.9" y="692.2" width="2.7" height="1.7"/>
<rect x="788.3" y="673.8" width="1.4" height="2.8"/>
<rect x="924.3" y="701.1" width="1.6" height="2.8"/>
<rect x="900.5" y="647.0" width="1.7" height="2.1"/>
<rect x="781.8" y="636.4" width="1.9" height="1.4"/>
<rect x="783.8" y="760.5" width="1.7" height="2.8"/>
<rect x="918.6" y="781.1" width="1.7" height="2.6"/>
<rect x="815.9" y="844.0" width="2.0" height="2.4"/>
<rect x="883.9" y="791.3" width="2.6" height="1.8"/>
<rect x="785.0" y="686.1" width="2.9" height="1.3"/>
<rect x="832.7" y="844.3" width="1.5" height="1.4"/>
<rect x="762.9" y="677.0" width="2.5" height="2.0"/>
<rect x="866.6" y="731.5" width="1.8" height="1.9"/>
<rect x="766.7" y="869.9" width="2.5" height="1.4"/>
<rect x="793.5" y="816.7" width="2.1" height="2.5"/>
<rect x="884.0" y="615.8" width="2.7" height="1.6"/>
<rect x="782.8" y="805.4" width="2.7" height="1.7"/>
<rect x="823.6" y="801.3" width="1.7" height="2.0"/>
<rect x="923.7" y="610.9" width="2.9" height="2.8"/>
<rect x="924.5" y="647.2" width="1.6" height="2.0"/>
<rect x="788.2" y="861.3" width="2.2" height="2.7"/>
<rect x="841.1" y="727.1" width="2.9" height="1.4"/>
<rect x="797.2" y="839.8" width="2.3" height="2.6"/>
<rect x="924.2" y="813.2" width="2.3" height="2.6"/>
<rect x="847.8" y="639.0" width="1.8" height="2.9"/>
<rect x="865.9" y="883.0" width="2.3" height="2.1"/>
<rect x="835.2" y="768.7" width="2.3" height="2.1"/>
<rect x="909.1" y="849.3" width="2.6" height="2.5"/>
<rect x="878.6" y="632.2" width="2.1" height="1.7"/>
<rect x="793.8" y="869.3" width="1.6" height="2.7"/>
<rect x="897.6" y="697.5" width="1.2" height="1.5"/>
<rect x="866.5" y="793.4" width="1.8" height="2.3"/>
<rect x="786.9" y="777.2" width="2.6" height="2.6"/>
<rect x="852.9" y="750.7" width="1.2" height="1.7"/>
<rect x="772.1" y="871.6" width="2.4" height="2.2"/>
<rect x="873.8" y="843.7" width="2.3" height="2.0"/>
<rect x="824.7" y="875.7" width="2.9" height="1.5"/>
<rect x="895.0" y="772.5" width="1.8" height="2.5"/>
<rect x="852.2" y="754.3" width="1.3" height="2.8"/>
<rect x="917.7" y="809.7" width="1.7" height="2.5"/>
<rect x="779.2" y="742.2" width="1.8" height="2.0"/>
<rect x="807.8" y="592.3" width="2.0" height="1.6"/>
<rect x="788.9" y="674.4" width="1.4" height="1.2"/>
<rect x="920.7" y="587.4" width="2.8" height="2.0"/>
<rect x="779.9" y="705.1" width="2.1" height="1.3"/>
<rect x="899.3" y="626.1" width="1.9" height="2.9"/>
<rect x="812.0" y="607.2" width="1.6" height="2.8"/>
<rect x="816.9" y="779.6" width="2.9" height="2.3"/>
<rect x="813.7" y="721.0" width="2.3" height="3.0"/>
<rect x="873.6" y="730.2" width="2.7" height="2.1"/>
<rect x="791.9" y="781.1" width="1.7" height="1.6"/>
<rect x="824.2" y="722.7" width="1.3" height="1.8"/>
<rect x="918.6" y="730.6" width="1.9" height="2.0"/>
<rect x="875.2" y="728.4" width="1.9" height="2.2"/>
<rect x="830.0" y="792.2" width="1.8" height="2.3"/>
<rect x="780.9" y="715.0" width="2.6" height="2.7"/>
<rect x="899.2" y="823.9" width="2.9" height="1.6"/>
<rect x="784.9" y="613.7" width="2.6" height="1.5"/>
<rect x="910.0" y="636.0" width="1.6" height="2.3"/>
<rect x="876.0" y="582.1" width="2.2" height="2.2"/>
<rect x="851.4" y="732.4" width="2.6" height="2.7"/>
<rect x="902.0" y="674.2" width="1.3" height="2.0"/>
<rect x="764.4" y="770.5" width="2.1" height="2.5"/>
<rect x="897.5" y="800.8" width="2.4" height="1.8"/>
<rect x="879.8" y="771.4" width="1.6" height="2.8"/>
<rect x="838.0" y="737.3" width="1.6" height="2.7"/>
<rect x="838.2" y="803.8" width="2.7" height="2.1"/>
<rect x="856.6" y="716.0" width="1.6" height="2.6"/>
<rect x="911.9" y="580.9" width="1.3" height="2.0"/>
<rect x="773.2" y="708.1" width="1.8" height="1.6"/>
<rect x="888.0" y="753.2" width="2.9" height="1.5"/>
<rect x="822.8" y="764.3" width="2.6" height="2.0"/>
<rect x="853.7" y="874.7" width="2.4" height="2.7"/>
<rect x="897.6" y="705.0" width="2.1" height="2.7"/>
<rect x="879.3" y="695.9" width="1.5" height="2.5"/>
<rect x="866.7" y="865.2" width="2.3" height="2.1"/>
<rect x="905.9" y="613.7" width="2.3" height="3.0"/>
<rect x="778.8" y="578.6" width="2.5" height="1.9"/>
<rect x="895.4" y="833.1" width="1.2" height="1.8"/>
<rect x="764.7" y="650.3" width="1.8" height="2.0"/>
<rect x="847.6" y="880.2" width="1.4" height="1.4"/>
<rect x="909.0" y="660.6" width="2.2" height="1.7"/>
<rect x="907.7" y="864.3" width="2.2" height="1.4"/>
<rect x="821.3" y="791.8" width="2.2" height="1.7"/>
<rect x="826.6" y="829.7" width="1.9" height="2.0"/>
<rect x="787.7" y="794.5" width="2.0" height="1.9"/>
<rect x="887.6" y="663.5" width="1.3" height="2.4"/>
<rect x="881.8" y="586.7" width="1.8" height="2.8"/>
<rect x="844.0" y="698.3" width="1.4" height="1.7"/>
<rect x="856.9" y="858.2" width="2.4" height="2.9"/>
<rect x="816.3" y="685.4" width="1.3" height="1.3"/>
<rect x="910.3" y="852.0" width="1.4" height="1.3"/>
<rect x="921.8" y="622.5" width="1.7" height="1.6"/>
<rect x="794.4" y="579.8" width="2.0" height="2.6"/>
<rect x="771.7" y="724.8" width="1.4" height="2.6"/>
<rect x="909.2" y="845.6" width="2.2" height="1.5"/>
<rect x="878.4" y="592.0" width="2.6" height="1.7"/>
<rect x="907.2" y="659.7" width="2.5" height="2.1"/>
<rect x="831.0" y="619.1" width="2.2" height="2.2"/>
<rect x="875.5" y="677.0" width="2.3" height="1.6"/>
<rect x="846.2" y="645.5" width="2.6" height="1.5"/>
<rect x="808.0" y="592.0" width="1.7" height="2.2"/>
<rect x="797.7" y="608.1" width="2.8" height="1.8"/>
<rect x="898.8" y="805.2" width="2.8" height="2.2"/>
<rect x="815.2" y="727.9" width="1.3" height="2.4"/>
<rect x="898.4" y="858.4" width="2.7" height="2.4"/>
<rect x="892.7" y="661.8" width="2.2" height="1.5"/>
<rect x="914.5" y="731.4" width="1.5" height="3.0"/>
<rect x="862.3" y="636.9" width="2.7" height="2.3"/>
<rect x="862.7" y="846.5" width="1.8" height="1.7"/>
<rect x="854.1" y="634.0" width="2.5" height="2.1"/>
<rect x="793.1" y="609.3" width="1.5" height="2.2"/>
<rect x="910.9" y="821.0" width="2.7" height="2.2"/>
<rect x="892.2" y="674.1" width="1.9" height="2.8"/>
<rect x="853.6" y="586.4" width="2.2" height="2.6"/>
<rect x="906.7" y="701.9" width="2.8" height="1.3"/>
<rect x="909.6" y="784.4" width="2.7" height="2.0"/>
<rect x="856.9" y="830.0" width="1.6" height="1.5"/>
<rect x="884.3" y="846.0" width="1.6" height="2.2"/>
<rect x="843.8" y="667.9" width="2.7" height="1.7"/>
<rect x="888.6" y="699.8" width="1.5" height="2.9"/>
<rect x="784.3" y="602.1" width="1.3" height="1.8"/>
<rect x="764.4" y="618.9" width="2.9" height="1.7"/>
<rect x="878.0" y="637.2" width="1.2" height="1.2"/>
<rect x="780.1" y="870.4" width="2.0" height="1.6"/>
<rect x="767.8" y="772.1" width="1.8" height="1.5"/>
<rect x="832.1" y="794.0" width="1.8" height="2.2"/>
<rect x="791.1" y="746.1" width="1.3" height="2.9"/>
<rect x="913.2" y="751.4" width="2.1" height="1.9"/>
<rect x="883.6" y="752.2" width="2.5" height="2.0"/>
<rect x="826.0" y="797.7" width="1.5" height="1.8"/>
<rect x="799.7" y="634.9" width="2.8" height="1.8"/>
<rect x="881.6" y="585.3" width="2.9" height="2.0"/>
<rect x="882.8" y="603.4" width="2.3" height="2.7"/>
<rect x="807.7" y="599.3" width="1.9" height="2.6"/>
<rect x="885.7" y="590.2" width="1.8" height="2.8"/>
<rect x="807.6" y="597.2" width="2.8" height="2.7"/>
<rect x="833.5" y="789.5" width="2.6" height="2.7"/>
<rect x="791.2" y="800.0" width="2.9" height="2.6"/>
<rect x="846.1" y="694.1" width="3.0" height="3.0"/>
<rect x="892.8" y="729.5" width="2.8" height="2.8"/>
<rect x="843.2" y="611.6" width="2.3" height="1.4"/>
<rect x="815.2" y="749.1" width="2.1" height="2.4"/>
<rect x="895.4" y="868.8" width="1.8" height="2.9"/>
<rect x="813.2" y="679.8" width="2.6" height="3.0"/>
<rect x="843.7" y="820.7" width="2.7" height="1.8"/>
<rect x="861.9" y="865.6" width="1.2" height="1.4"/>
<rect x="904.0" y="748.3" width="2.0" height="2.6"/>
<rect x="833.2" y="613.8" width="1.8" height="2.6"/>
<rect x="865.9" y="726.1" width="1.2" height="3.0"/>
<rect x="773.0" y="657.6" width="2.6" height="2.9"/>
<rect x="873.5" y="690.3" width="2.5" height="2.4"/>
<rect x="855.4" y="817.4" width="2.2" height="2.2"/>
<rect x="802.6" y="814.9" width="1.4" height="1.4"/>
<rect x="863.9" y="584.6" width="2.8" height="1.5"/>
<rect x="837.1" y="651.9" width="2.1" height="2.3"/>
<rect x="920.5" y="617.1" width="1.6" height="1.6"/>
<rect x="777.6" y="573.9" width="2.9" height="2.9"/>
<rect x="766.5" y="832.5" width="2.2" height="1.6"/>
<rect x="905.6" y="606.6" width="2.4" height="2.4"/>
<rect x="875.3" y="644.6" width="1.5" height="2.3"/>
<rect x="882.0" y="580.2" width="2.5" height="3.0"/>
<rect x="826.5" y="751.1" width="1.8" height="2.8"/>
<rect x="796.7" y="601.5" width="2.1" height="2.0"/>
<rect x="854.1" y="634.3" width="2.9" height="2.2"/>
<rect x="824.2" y="805.4" width="1.3" height="2.9"/>
<rect x="897.7" y="650.9" width="2.0" height="1.3"/>
<rect x="890.8" y="876.6" width="2.3" height="3.0"/>
<rect x="837.9" y="843.5" width="2.7" height="2.9"/>
<rect x="835.8" y="730.2" width="1.3" height="2.9"/>
<rect x="774.5" y="753.0" width="2.3" height="1.5"/>
<rect x="817.8" y="664.5" width="1.2" height="1.9"/>
<rect x="823.0" y="796.2" width="2.5" height="2.9"/>
<rect x="903.7" y="650.7" width="2.3" height="2.4"/>
<rect x="890.2" y="614.2" width="1.8" height="2.3"/>
<rect x="812.0" y="858.4" width="1.9" height="2.5"/>
<rect x="771.3" y="852.8" width="3.0" height="2.9"/>
<rect x="816.3" y="832.5" width="3.0" height="1.4"/>
<rect x="772.2" y="779.3" width="3.0" height="1.3"/>
<rect x="898.2" y="778.0" width="2.1" height="1.5"/>
<rect x="843.7" y="727.0" width="1.6" height="2.8"/>
</g>
</g>
<rect x="756.500" y="243.500" width="632" height="646" fill="none" stroke="#d4d7dc" stroke-width="1"/>
<g stroke="#dcdcdc" stroke-width="1.500" fill="none"><path d="M1191.900 549V611H1254"/><rect x="1186.300" y="604.400" width="12.400" height="12.400" rx="2"/><path d="M1193.800 530.200L1200.800 537.200L1207.800 530.200M1200.800 537.200V543.600"/><path d="M1259 594.900L1273 608.900M1273 594.900L1259 608.900"/></g>
<g id="viewcube">
<text x="503.7" y="242.3" font-size="15" fill="#e6e8ec" textLength="155" lengthAdjust="spacingAndGlyphs">[−][Top][2D Wireframe]</text>

<rect x="1845.600" y="239.500" width="13.600" height="3.400" fill="#f2f2f2"/>
<path d="M1874.500 235.500V233.300H1883.300V241.500H1881" fill="none" stroke="#f2f2f2" stroke-width="1.800"/><rect x="1871.900" y="236.300" width="8.200" height="7.400" fill="none" stroke="#f2f2f2" stroke-width="2"/>
<path d="M1897.300 234.500L1906.300 242.500M1906.300 234.500L1897.300 242.500" stroke="#f2f2f2" stroke-width="2.800"/>
<circle cx="1835.100" cy="335.100" r="55" fill="none" stroke="#474d58" stroke-width="13.700"/>
<text x="1835.1" y="285.4" font-size="22" fill="#bbbdc1" text-anchor="middle" textLength="14.3" lengthAdjust="spacingAndGlyphs" font-weight="bold">N</text>

<text x="1835" y="401.6" font-size="22" fill="#bbbdc1" text-anchor="middle" textLength="14.6" lengthAdjust="spacingAndGlyphs" font-weight="bold">S</text>

<text x="1776.9" y="343.1" font-size="22" fill="#bbbdc1" text-anchor="middle" textLength="21" lengthAdjust="spacingAndGlyphs" font-weight="bold">W</text>

<text x="1893.3" y="343.1" font-size="22" fill="#bbbdc1" text-anchor="middle" textLength="13.4" lengthAdjust="spacingAndGlyphs" font-weight="bold">E</text>

<rect x="1808.200" y="308.200" width="53.800" height="53.300" fill="#a8aaaf"/>
<rect x="1817.900" y="317.900" width="34" height="34" fill="#b0b4b9"/>
<text x="1835.1" y="340.2" font-size="14" fill="#565b67" text-anchor="middle" textLength="22.4" lengthAdjust="spacingAndGlyphs" font-weight="bold">TOP</text>

<rect x="1806.700" y="425.300" width="55.900" height="19.400" rx="4" fill="#9b9dac" stroke="#a9abb8" stroke-width="1"/>
<text x="1811.2" y="439.4" font-size="14" fill="#7b7e8c" textLength="29.5" lengthAdjust="spacingAndGlyphs">WCS</text>

<path d="M1847.900 432.200H1857.500L1852.700 437.600Z" fill="#a9abb8" stroke="#878a98" stroke-width="0.800"/>
<rect x="1876.700" y="475.900" width="40.100" height="259" rx="3" fill="#6a6f77" fill-opacity="0.72"/>
<g fill="none" stroke="#4a5059" stroke-width="1.300">
<circle cx="1910" cy="482" r="3.500"/><circle cx="1910" cy="728.200" r="3.500"/><path d="M1907.500 728.200H1912.500"/>
<path d="M1896.900 497.300H1909.500V510Q1909.500 523 1896.900 523Q1884 523 1884 510Q1884 497.300 1896.900 497.300Z"/><circle cx="1896.900" cy="510" r="7.300"/><path d="M1891.700 515.200L1887.500 519.500M1902.100 515.200L1906.300 519.500"/>
<path d="M1889 566L1884 560Q1883 557.500 1886 558L1890 562V552Q1891.500 549.500 1893 552V560V550Q1894.500 547.500 1896 550V560V550.500Q1897.500 548 1899 550.500V560.500V553Q1900.500 550.500 1902 553V564L1905 559Q1907.500 557.500 1907.500 560.500L1903 571Q1901 575.500 1897 575.500H1894Q1891 575.500 1889 566Z"/>
<path d="M1883.500 584.500L1900.500 601.500M1901.500 584.500L1883.500 602.500M1883.500 589V584.500H1888M1897 584.500H1901.500V589M1883.500 598V602.500H1888"/><circle cx="1902" cy="602.500" r="5.500"/><path d="M1906 606.500L1910.500 611" stroke-width="2.600"/>
<ellipse cx="1896.900" cy="647.500" rx="13.500" ry="5"/><path d="M1894.500 657.500V640H1891L1896.900 632.500L1902.800 640H1899.300V657.500Z"/><path d="M1890 649L1886 652.500L1890.500 655.500"/>
<rect x="1882.700" y="683" width="7" height="7"/><rect x="1892.700" y="683" width="7" height="7"/><rect x="1902.700" y="683" width="7" height="7"/><rect x="1882.700" y="694.500" width="19.500" height="17"/>
</g>
<path d="M1888.500 698.500L1897 703L1888.500 707.500Z" fill="#4a5059"/>
<path d="M1893.900 534.9H1899.900L1896.900 538.1999999999999Z" fill="#4a5059"/>
<path d="M1893.900 621.5H1899.900L1896.900 624.8Z" fill="#4a5059"/>
<path d="M1893.900 668.5H1899.900L1896.900 671.8Z" fill="#4a5059"/>
</g>
<g id="bottom">
<rect x="799" y="923.500" width="72" height="32" fill="#252c37"/>
<rect x="804" y="927" width="1.300" height="1.500" fill="#aeb3bd"/><rect x="807" y="927" width="1.300" height="1.500" fill="#aeb3bd"/>
<rect x="804" y="930" width="1.300" height="1.500" fill="#aeb3bd"/><rect x="807" y="930" width="1.300" height="1.500" fill="#aeb3bd"/>
<rect x="804" y="933" width="1.300" height="1.500" fill="#aeb3bd"/><rect x="807" y="933" width="1.300" height="1.500" fill="#aeb3bd"/>
<rect x="804" y="936" width="1.300" height="1.500" fill="#aeb3bd"/><rect x="807" y="936" width="1.300" height="1.500" fill="#aeb3bd"/>
<rect x="804" y="939" width="1.300" height="1.500" fill="#aeb3bd"/><rect x="807" y="939" width="1.300" height="1.500" fill="#aeb3bd"/>
<rect x="804" y="942" width="1.300" height="1.500" fill="#aeb3bd"/><rect x="807" y="942" width="1.300" height="1.500" fill="#aeb3bd"/>
<rect x="804" y="945" width="1.300" height="1.500" fill="#aeb3bd"/><rect x="807" y="945" width="1.300" height="1.500" fill="#aeb3bd"/>
<rect x="804" y="948" width="1.300" height="1.500" fill="#aeb3bd"/><rect x="807" y="948" width="1.300" height="1.500" fill="#aeb3bd"/>
<path d="M819 933L829 943M829 933L819 943" stroke="#d6d8dc" stroke-width="2.200"/>
<path d="M846.500 946L856 936.500" stroke="#c9ccd2" stroke-width="3" stroke-linecap="round"/><path d="M855.200 938.400Q852.500 933.500 856.500 930.500Q859 929 861.500 930L857.800 933.700L860.300 936.200L864 932.500Q865 935 863.500 937.500Q860.500 941 855.200 938.400Z" fill="#c9ccd2"/>
<rect x="870.800" y="922.600" width="749" height="32.600" rx="2" fill="#c1c1c1"/>
<rect x="876.700" y="931" width="19" height="15" fill="#6a6a6a"/><rect x="878" y="934" width="16.400" height="10.800" fill="#e2e2e2"/><path d="M880 936.500L883 938.700L880 941M884.500 942H889" stroke="#444" stroke-width="1" fill="none"/>
<path d="M899 937.500H906.500L902.750 941.800Z" fill="#444"/>
<text x="917.7" y="944.3" font-size="14" fill="#505050" textLength="123.3" lengthAdjust="spacingAndGlyphs" font-style="italic" font-family="Liberation Mono, monospace">Type a command</text>

<path d="M1605 942.500H1613L1609 937.800Z" fill="#444"/>
<path d="M18.700 961.400H95L83.300 990.500H9.200Z" fill="#3b4453"/>
<text x="30.4" y="981.8" font-size="15" fill="#fff" textLength="43.7" lengthAdjust="spacingAndGlyphs" font-weight="bold">Model</text>

<text x="104" y="981.8" font-size="15" fill="#eceef1" textLength="51.3" lengthAdjust="spacingAndGlyphs">Layout1</text>

<text x="186.1" y="981.8" font-size="15" fill="#eceef1" textLength="51.6" lengthAdjust="spacingAndGlyphs">Layout2</text>

<path d="M167 987.500L175.500 966M249.500 987.500L258 966M299.500 987.500L308 966" stroke="#4a5262" stroke-width="1.200"/>
<path d="M270.200 976.600H286M278.100 968.700V984.500" stroke="#f2f2f2" stroke-width="2.200"/>
<rect x="1236" y="997.700" width="5" height="30.300" fill="#222933"/>
<rect x="1300.2" y="997.700" width="3.7" height="30.300" fill="#222933"/>
<rect x="1382.8" y="997.700" width="3.2" height="30.300" fill="#222933"/>
<rect x="1515.3" y="997.700" width="1.2" height="30.300" fill="#222933"/>
<rect x="1597.3" y="997.700" width="3.6" height="30.300" fill="#222933"/>
<rect x="1731.8" y="997.700" width="3.3" height="30.300" fill="#222933"/>
<rect x="1785" y="997.700" width="1.2" height="30.300" fill="#222933"/>
<rect x="1815.9" y="997.700" width="2.9" height="30.300" fill="#222933"/>
<rect x="1849" y="997.700" width="3.2" height="30.300" fill="#222933"/>
<rect x="1855.9" y="997.700" width="2.9" height="30.300" fill="#222933"/>
<text x="1245.9" y="1018.6" font-size="15" fill="#fff" textLength="49.8" lengthAdjust="spacingAndGlyphs">MODEL</text>

<rect x="1304" y="998.600" width="27.800" height="28.400" fill="#5b8dc4"/>
<path d="M1312.500 1003.500V1022.500M1318 1003.500V1022.500M1323.500 1003.500V1022.500M1308.500 1007.500H1327.500M1308.500 1013H1327.500M1308.500 1018.500H1327.500" stroke="#fff" stroke-width="1.300"/>
<rect x="1340.3" y="1005.3" width="2.600" height="2.600" fill="#d6d8dc"/>
<rect x="1340.3" y="1011.3" width="2.600" height="2.600" fill="#d6d8dc"/>
<rect x="1340.3" y="1017.3" width="2.600" height="2.600" fill="#d6d8dc"/>
<rect x="1346.7" y="1005.3" width="2.600" height="2.600" fill="#d6d8dc"/>
<rect x="1346.7" y="1011.3" width="2.600" height="2.600" fill="#d6d8dc"/>
<rect x="1346.7" y="1017.3" width="2.600" height="2.600" fill="#d6d8dc"/>
<rect x="1353.1" y="1005.3" width="2.600" height="2.600" fill="#d6d8dc"/>
<rect x="1353.1" y="1011.3" width="2.600" height="2.600" fill="#d6d8dc"/>
<rect x="1353.1" y="1017.3" width="2.600" height="2.600" fill="#d6d8dc"/>
<path d="M1367.6 1010H1378.0L1372.8 1015Z" fill="#d6d8dc"/>
<path d="M1391.500 1003V1022.500H1411M1391.500 1016.500H1397.500V1022.500" stroke="#d6d8dc" stroke-width="1.200" fill="none"/>
<circle cx="1429" cy="1013.500" r="8" fill="none" stroke="#d6d8dc" stroke-width="1.200"/><path d="M1438.500 1004.500L1429 1013.500H1441" stroke="#d6d8dc" stroke-width="1.200" fill="none"/>
<path d="M1450.6 1010H1461.0L1455.8 1015Z" fill="#d6d8dc"/>
<path d="M1473.500 1005L1488 1019.500" stroke="#c05a5a" stroke-width="1.200"/><path d="M1481.500 1003V1021" stroke="#4cbf6a" stroke-width="1.200"/>
<rect x="1479.700" y="1010.700" width="3.200" height="3.200" fill="#3b4453" stroke="#d6d8dc" stroke-width="1"/>
<path d="M1500.6 1010H1511.0L1505.8 1015Z" fill="#d6d8dc"/>
<path d="M1522 1019.500L1536.500 1006" stroke="#d6d8dc" stroke-width="1.200"/><path d="M1522 1020H1542" stroke="#8a8f99" stroke-width="1.600"/><rect x="1527.800" y="1011.300" width="3.200" height="3.200" fill="#d6d8dc"/>
<rect x="1547.900" y="998.600" width="28.100" height="28.400" fill="#5b8dc4"/><rect x="1554.500" y="1006" width="17.500" height="16" fill="none" stroke="#fff" stroke-width="1.300"/><rect x="1552.300" y="1003.300" width="5" height="5" fill="#5b8dc4" stroke="#fff" stroke-width="1.100"/>
<path d="M1581.7 1010H1592.1000000000001L1586.9 1015Z" fill="#d6d8dc"/>
<rect x="1601" y="998.600" width="28.100" height="28.400" fill="#5b8dc4"/>
<path d="M1614 1003L1617.6 1013.500L1622.6 1022.800L1615.7 1018.500L1614 1021.500L1612.3 1018.500L1605.4 1022.800L1610.4 1013.500Z" fill="#fff"/>
<circle cx="1621.500" cy="1007.200" r="3" fill="none" stroke="#fff" stroke-width="1"/>
<path d="M1644 1003L1647.6 1013.500L1652.6 1022.800L1645.7 1018.500L1644 1021.500L1642.3 1018.500L1635.4 1022.800L1640.4 1013.500Z" fill="#cfd1d5"/>
<path d="M1652.500 1003.500L1649 1008.500H1651.500L1649.500 1012.500L1654.500 1007H1652L1654 1003.500Z" fill="#cfd1d5"/>
<path d="M1674.5 1003L1678.1 1013.500L1683.1 1022.800L1676.2 1018.500L1674.5 1021.500L1672.8 1018.500L1665.9 1022.800L1670.9 1013.500Z" fill="#cfd1d5"/>
<text x="1696" y="1019" font-size="15" fill="#f4f4f4" textLength="15.5" lengthAdjust="spacingAndGlyphs">1:1</text>

<path d="M1717.0 1010H1727.4L1722.2 1015Z" fill="#d6d8dc"/>
<circle cx="1749.700" cy="1012.800" r="6" fill="none" stroke="#d6d8dc" stroke-width="4.500"/><circle cx="1749.700" cy="1012.800" r="9" fill="none" stroke="#d6d8dc" stroke-width="3" stroke-dasharray="3.500 3.570"/>
<path d="M1769.8 1010H1780.2L1775 1015Z" fill="#d6d8dc"/>
<path d="M1791 1012.800H1810M1800.500 1003.300V1022.300" stroke="#f0f0f0" stroke-width="2.200"/>
<rect x="1824.200" y="1003.500" width="7.500" height="7" fill="none" stroke="#d6d8dc" stroke-width="1.100"/><circle cx="1839.500" cy="1011.700" r="4" fill="none" stroke="#d6d8dc" stroke-width="1.100"/><path d="M1831.500 1015.500L1836 1022.500H1827Z" fill="none" stroke="#d6d8dc" stroke-width="1.100"/>
<rect x="1864.700" y="1005.500" width="19" height="14" fill="none" stroke="#d6d8dc" stroke-width="1.200"/><path d="M1867.500 1017L1872.500 1012M1867.500 1013V1017H1871.500M1881 1008L1876 1013M1881 1012V1008H1877" stroke="#d6d8dc" stroke-width="1.300" fill="none"/>
<path d="M1893.700 1005.500H1914M1893.700 1012.800H1914M1893.700 1020H1914" stroke="#f0f0f0" stroke-width="2.200"/>
</g>
</svg>
</body></html>
